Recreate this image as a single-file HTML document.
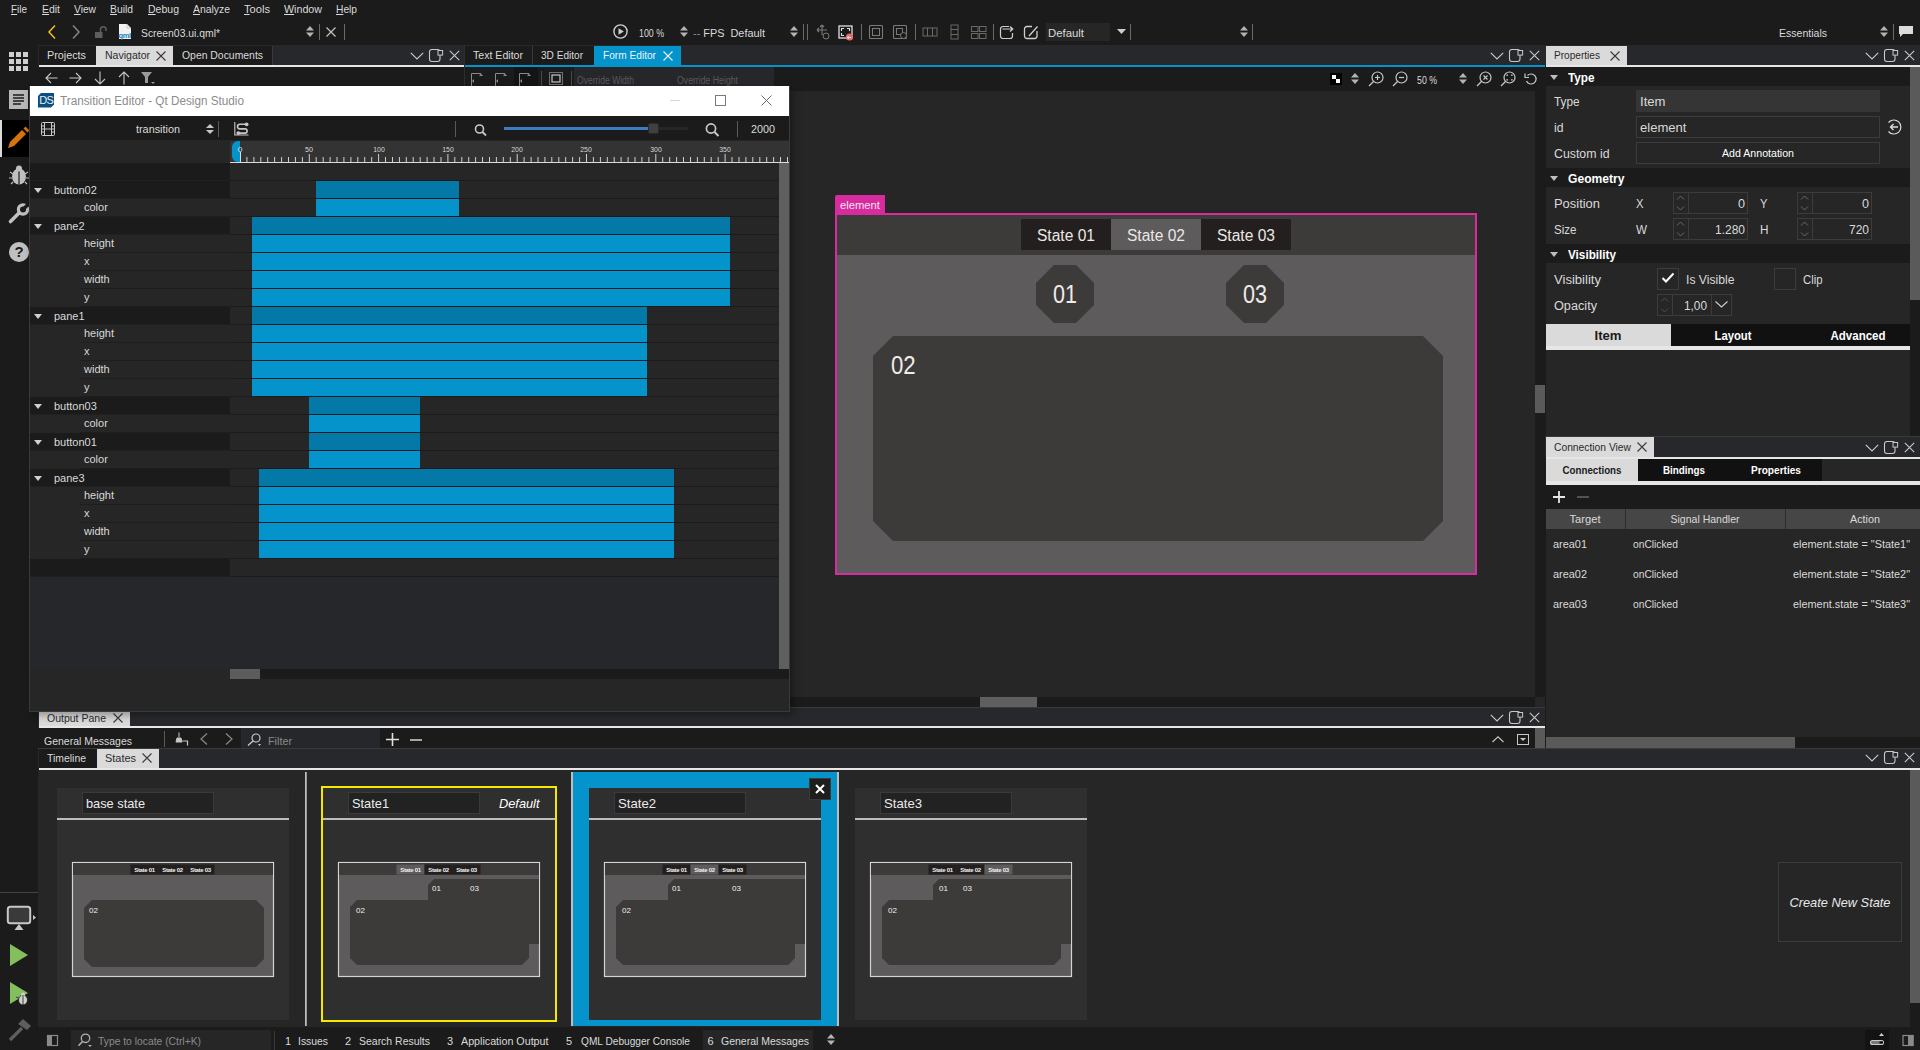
<!DOCTYPE html><html><head><meta charset="utf-8"><style>
html,body{margin:0;padding:0;width:1920px;height:1050px;overflow:hidden;background:#1b1b1b;}
.a{position:absolute;}
.t{font-family:"Liberation Sans",sans-serif;white-space:nowrap;}
svg{overflow:visible}
</style></head><body>
<div class="a" style="left:0px;top:0px;width:1920px;height:18px;background:#1b1b1b;"></div>
<div class="a t" style="left:11px;top:2px;font-size:11px;line-height:15px;color:#dadada;font-weight:normal;transform:scaleX(0.9027);transform-origin:left center;text-underline-offset:1px;"><u>F</u>ile</div>
<div class="a t" style="left:42px;top:2px;font-size:11px;line-height:15px;color:#dadada;font-weight:normal;transform:scaleX(0.9496);transform-origin:left center;text-underline-offset:1px;"><u>E</u>dit</div>
<div class="a t" style="left:74px;top:2px;font-size:11px;line-height:15px;color:#dadada;font-weight:normal;transform:scaleX(0.9304);transform-origin:left center;text-underline-offset:1px;"><u>V</u>iew</div>
<div class="a t" style="left:110px;top:2px;font-size:11px;line-height:15px;color:#dadada;font-weight:normal;transform:scaleX(0.9403);transform-origin:left center;text-underline-offset:1px;"><u>B</u>uild</div>
<div class="a t" style="left:148px;top:2px;font-size:11px;line-height:15px;color:#dadada;font-weight:normal;transform:scaleX(0.9563);transform-origin:left center;text-underline-offset:1px;"><u>D</u>ebug</div>
<div class="a t" style="left:193px;top:2px;font-size:11px;line-height:15px;color:#dadada;font-weight:normal;transform:scaleX(0.9454);transform-origin:left center;text-underline-offset:1px;"><u>A</u>nalyze</div>
<div class="a t" style="left:244px;top:2px;font-size:11px;line-height:15px;color:#dadada;font-weight:normal;transform:scaleX(1.0125);transform-origin:left center;text-underline-offset:1px;"><u>T</u>ools</div>
<div class="a t" style="left:284px;top:2px;font-size:11px;line-height:15px;color:#dadada;font-weight:normal;transform:scaleX(0.9713);transform-origin:left center;text-underline-offset:1px;"><u>W</u>indow</div>
<div class="a t" style="left:336px;top:2px;font-size:11px;line-height:15px;color:#dadada;font-weight:normal;transform:scaleX(0.9282);transform-origin:left center;text-underline-offset:1px;"><u>H</u>elp</div>
<div class="a" style="left:0px;top:18px;width:1920px;height:27px;background:#1b1b1b;"></div>
<svg class="a" style="left:48px;top:25px;" width="8" height="14" viewBox="0 0 8 14"><path d="M7 0.5 L1 7.0 L7 13.5" fill="none" stroke="#efc21a" stroke-width="1.5"/></svg>
<svg class="a" style="left:72px;top:25px;" width="8" height="14" viewBox="0 0 8 14"><path d="M1 0.5 L7 7.0 L1 13.5" fill="none" stroke="#8a8a8a" stroke-width="1.4"/></svg>
<svg class="a" style="left:94px;top:25px;" width="14" height="14" viewBox="0 0 14 14"><rect x="1" y="7" width="7.5" height="6" fill="#5e5e5e"/><path d="M6.5 7 V4 A2.8 2.8 0 0 1 12 4 V6" fill="none" stroke="#5e5e5e" stroke-width="1.5"/></svg>
<svg class="a" style="left:118px;top:23px;" width="14" height="17" viewBox="0 0 14 17"><path d="M1 1 H9 L13 5 V16 H1Z" fill="#f2f2f2"/><path d="M9 1 V5 H13" fill="none" stroke="#bbb" stroke-width="0.8"/><text x="0.5" y="14.5" font-size="7.5" font-weight="bold" fill="#1a86b8" font-family="Liberation Sans" letter-spacing="-0.4">qml</text></svg>
<div class="a t" style="left:141px;top:26px;font-size:11px;line-height:15px;color:#dadada;font-weight:normal;transform:scaleX(0.9431);transform-origin:left center;">Screen03.ui.qml*</div>
<svg class="a" style="left:306px;top:26px;" width="8" height="11" viewBox="0 0 8 11"><path d="M0 4.5 L4.0 0 L8 4.5Z M0 6.5 L4.0 11 L8 6.5Z" fill="#b3b3b3"/></svg>
<div class="a" style="left:319px;top:24px;width:1px;height:16px;background:#6a6a6a;"></div>
<svg class="a" style="left:326px;top:27px;" width="10" height="10" viewBox="0 0 10 10"><path d="M0.5 0.5 L9.5 9.5 M9.5 0.5 L0.5 9.5" stroke="#c0c0c0" stroke-width="1.3"/></svg>
<div class="a" style="left:344px;top:24px;width:1px;height:16px;background:#6a6a6a;"></div>
<svg class="a" style="left:613px;top:24px;" width="15" height="15" viewBox="0 0 15 15"><circle cx="7.5" cy="7.5" r="6.6" fill="none" stroke="#cfcfcf" stroke-width="1.4"/><path d="M5.5 4.2 L10.8 7.5 L5.5 10.8Z" fill="#cfcfcf"/></svg>
<div class="a t" style="left:639px;top:26px;font-size:11px;line-height:15px;color:#dadada;font-weight:normal;transform:scaleX(0.8015);transform-origin:left center;">100 %</div>
<svg class="a" style="left:680px;top:26px;" width="8" height="11" viewBox="0 0 8 11"><path d="M0 4.5 L4.0 0 L8 4.5Z M0 6.5 L4.0 11 L8 6.5Z" fill="#b3b3b3"/></svg>
<div class="a t" style="left:693px;top:26px;font-size:11px;line-height:15px;color:#dadada;font-weight:normal;transform:scaleX(0.9898);transform-origin:left center;"><span style="color:#8a8a8a">--</span> FPS&nbsp; Default</div>
<svg class="a" style="left:790px;top:26px;" width="8" height="11" viewBox="0 0 8 11"><path d="M0 4.5 L4.0 0 L8 4.5Z M0 6.5 L4.0 11 L8 6.5Z" fill="#b3b3b3"/></svg>
<div class="a" style="left:803px;top:24px;width:1px;height:16px;background:#6a6a6a;"></div>
<div class="a" style="left:807px;top:24px;width:1px;height:16px;background:#6a6a6a;"></div>
<svg class="a" style="left:815px;top:24px;" width="16" height="16" viewBox="0 0 16 16"><path d="M7 1 V11 M2 6 H12 M7 1 L5 3 M7 1 L9 3 M2 6 L4 4 M2 6 L4 8" stroke="#7a7a7a" stroke-width="1.1" fill="none"/><circle cx="11" cy="12" r="3" fill="none" stroke="#7a7a7a"/></svg>
<svg class="a" style="left:838px;top:25px;" width="16" height="16" viewBox="0 0 16 16"><rect x="1" y="1" width="13" height="12" fill="none" stroke="#e0e0e0" stroke-width="1.3"/><path d="M3.5 6 V3.5 H6 M9 3.5 H11.5 V6 M3.5 8 V10.5 H6" stroke="#e0e0e0" stroke-width="1.1" fill="none"/><circle cx="11.5" cy="12" r="3.6" fill="#e86a6a"/><path d="M9.8 12.5 H13 M10.5 11 L9.5 12.5 L10.5 14" stroke="#fff" stroke-width="0.8" fill="none"/></svg>
<div class="a" style="left:861px;top:24px;width:1px;height:16px;background:#6a6a6a;"></div>
<svg class="a" style="left:868px;top:24px;" width="16" height="16" viewBox="0 0 16 16"><rect x="1.5" y="1.5" width="13" height="13" rx="1" fill="none" stroke="#7a7a7a" stroke-width="1.1"/><rect x="4.5" y="4.5" width="7" height="7" fill="none" stroke="#7a7a7a" stroke-width="1"/></svg>
<svg class="a" style="left:892px;top:24px;" width="16" height="16" viewBox="0 0 16 16"><rect x="1.5" y="1.5" width="13" height="13" rx="1" fill="none" stroke="#7a7a7a" stroke-width="1.1"/><rect x="4.5" y="4.5" width="6" height="6" fill="none" stroke="#7a7a7a"/><circle cx="11.5" cy="11.5" r="3" fill="#1b1b1b" stroke="#7a7a7a"/></svg>
<div class="a" style="left:915px;top:24px;width:1px;height:16px;background:#6a6a6a;"></div>
<svg class="a" style="left:922px;top:27px;" width="16" height="10" viewBox="0 0 16 10"><rect x="1" y="1" width="14" height="8" fill="none" stroke="#6a6a6a" stroke-width="1"/><path d="M5.5 1 V9 M10.5 1 V9" stroke="#6a6a6a"/></svg>
<svg class="a" style="left:950px;top:24px;" width="9" height="16" viewBox="0 0 9 16"><rect x="1" y="1" width="7" height="14" fill="none" stroke="#6a6a6a" stroke-width="1"/><path d="M1 5.5 H8 M1 10.5 H8" stroke="#6a6a6a"/></svg>
<svg class="a" style="left:971px;top:26px;" width="16" height="13" viewBox="0 0 16 13"><rect x="0.5" y="0.5" width="6.5" height="5" fill="none" stroke="#6a6a6a"/><rect x="8.5" y="0.5" width="6.5" height="5" fill="none" stroke="#6a6a6a"/><rect x="0.5" y="7.5" width="6.5" height="5" fill="none" stroke="#6a6a6a"/><rect x="8.5" y="7.5" width="6.5" height="5" fill="none" stroke="#6a6a6a"/></svg>
<div class="a" style="left:993px;top:24px;width:1px;height:16px;background:#6a6a6a;"></div>
<svg class="a" style="left:999px;top:24px;" width="16" height="16" viewBox="0 0 16 16"><path d="M13.5 9 V12 A2.5 2.5 0 0 1 11 14.5 H4 A2.5 2.5 0 0 1 1.5 12 V5 A2.5 2.5 0 0 1 4 2.5 H10" fill="none" stroke="#cfcfcf" stroke-width="1.2"/><path d="M3.5 5 H13.5 M11 2.5 L13.8 5 L11 7.5" fill="none" stroke="#cfcfcf" stroke-width="1.2"/></svg>
<svg class="a" style="left:1023px;top:24px;" width="16" height="16" viewBox="0 0 16 16"><path d="M14 7 V12 A2.5 2.5 0 0 1 11.5 14.5 H4 A2.5 2.5 0 0 1 1.5 12 V5 A2.5 2.5 0 0 1 4 2.5 H9 M6 12 L14.5 2.5" fill="none" stroke="#cfcfcf" stroke-width="1.3"/></svg>
<div class="a" style="left:1046px;top:23px;width:64px;height:18px;background:#262626;"></div>
<div class="a t" style="left:1048px;top:26px;font-size:11px;line-height:15px;color:#dadada;font-weight:normal;transform:scaleX(1.0329);transform-origin:left center;">Default</div>
<svg class="a" style="left:1117px;top:29px;" width="9" height="5" viewBox="0 0 9 5"><path d="M0 0 H9 L4.5 5Z" fill="#cfcfcf"/></svg>
<div class="a" style="left:1130px;top:24px;width:1px;height:16px;background:#6a6a6a;"></div>
<svg class="a" style="left:1240px;top:26px;" width="8" height="11" viewBox="0 0 8 11"><path d="M0 4.5 L4.0 0 L8 4.5Z M0 6.5 L4.0 11 L8 6.5Z" fill="#b3b3b3"/></svg>
<div class="a" style="left:1252px;top:24px;width:1px;height:16px;background:#6a6a6a;"></div>
<div class="a t" style="left:1779px;top:26px;font-size:11px;line-height:15px;color:#dadada;font-weight:normal;transform:scaleX(0.9574);transform-origin:left center;">Essentials</div>
<svg class="a" style="left:1880px;top:26px;" width="8" height="11" viewBox="0 0 8 11"><path d="M0 4.5 L4.0 0 L8 4.5Z M0 6.5 L4.0 11 L8 6.5Z" fill="#b3b3b3"/></svg>
<div class="a" style="left:1893px;top:24px;width:1px;height:16px;background:#6a6a6a;"></div>
<svg class="a" style="left:1898px;top:25px;" width="16" height="12" viewBox="0 0 16 12"><path d="M1 1 H15 V9 H5 L2 12 V9 H1Z" fill="#dcdcdc"/></svg>
<div class="a" style="left:0px;top:45px;width:38px;height:985px;background:#1b1b1b;"></div>
<svg class="a" style="left:9px;top:52px;" width="20" height="20" viewBox="0 0 20 20"><rect x="0" y="0" width="5" height="5" fill="#cfcfcf"/><rect x="0" y="7" width="5" height="5" fill="#cfcfcf"/><rect x="0" y="14" width="5" height="5" fill="#cfcfcf"/><rect x="7" y="0" width="5" height="5" fill="#cfcfcf"/><rect x="7" y="7" width="5" height="5" fill="#cfcfcf"/><rect x="7" y="14" width="5" height="5" fill="#cfcfcf"/><rect x="14" y="0" width="5" height="5" fill="#cfcfcf"/><rect x="14" y="7" width="5" height="5" fill="#cfcfcf"/><rect x="14" y="14" width="5" height="5" fill="#cfcfcf"/></svg>
<div class="a" style="left:9px;top:90px;width:19px;height:19px;background:#b8b8b8;"></div>
<svg class="a" style="left:9px;top:90px;" width="19" height="19" viewBox="0 0 19 19"><path d="M4 5 H15 M4 8 H15 M4 11 H15 M4 14 H12" stroke="#1b1b1b" stroke-width="1.3"/></svg>
<div class="a" style="left:0px;top:120px;width:30px;height:37px;background:#000000;"></div>
<div class="a" style="left:0px;top:120px;width:2px;height:37px;background:#dadada;"></div>
<svg class="a" style="left:6px;top:126px;" width="24" height="24" viewBox="0 0 24 24"><path d="M2 22 L4 16 L16 4 L20 8 L8 20Z" fill="#d9720a"/><path d="M17.5 2.5 L19.5 0.5 L23.5 4.5 L21.5 6.5Z" fill="#d9720a"/></svg>
<svg class="a" style="left:8px;top:163px;" width="22" height="24" viewBox="0 0 22 24"><ellipse cx="11" cy="13.5" rx="7" ry="8" fill="#c0c0c0"/><path d="M11 6 V21.5" stroke="#1b1b1b" stroke-width="1.2"/><path d="M2 9 L5 11 M20 9 L17 11 M1 15 H4 M21 15 H18 M3 21 L5 19 M19 21 L17 19" stroke="#c0c0c0" stroke-width="1.2"/><circle cx="11" cy="5.5" r="3" fill="#c0c0c0"/></svg>
<svg class="a" style="left:8px;top:202px;" width="22" height="24" viewBox="0 0 22 24"><path d="M2.5 19.5 L11 11" stroke="#c0c0c0" stroke-width="3.6" stroke-linecap="round"/><circle cx="15" cy="7.5" r="4.6" fill="none" stroke="#c0c0c0" stroke-width="3.2"/><path d="M15 7.5 L21 1.5" stroke="#1b1b1b" stroke-width="3.4"/></svg>
<svg class="a" style="left:8px;top:241px;" width="22" height="22" viewBox="0 0 22 22"><circle cx="11" cy="11" r="10" fill="#c0c0c0"/><text x="11" y="16" text-anchor="middle" font-size="15" font-weight="bold" fill="#1b1b1b" font-family="Liberation Sans">?</text></svg>
<div class="a" style="left:0px;top:892px;width:38px;height:1px;background:#444444;"></div>
<svg class="a" style="left:6px;top:905px;" width="32" height="26" viewBox="0 0 32 26"><rect x="1.8" y="1.8" width="22.4" height="16.4" rx="2.5" fill="#3a3a3a" stroke="#c8c8c8" stroke-width="2"/><path d="M8.5 25 L13 19 L17.5 25Z" fill="#c8c8c8"/><path d="M27 10 L30 12.5 L27 15Z" fill="#c8c8c8"/></svg>
<svg class="a" style="left:10px;top:944px;" width="18" height="22" viewBox="0 0 18 22"><path d="M0 0 L18 11 L0 22Z" fill="#84bf5e"/></svg>
<svg class="a" style="left:10px;top:982px;" width="20" height="24" viewBox="0 0 20 24"><path d="M0 0 L18 11 L0 22Z" fill="#84bf5e"/><ellipse cx="13" cy="18" rx="4.5" ry="5" fill="#d0d0d0" stroke="#1b1b1b" stroke-width="0.8"/><circle cx="13" cy="12.5" r="2" fill="#d0d0d0"/><path d="M13 13 V23 M6 15 L8.5 16 M20 15 L17.5 16 M6 21 L8.5 20 M20 21 L17.5 20" stroke="#1b1b1b" stroke-width="0.8"/></svg>
<svg class="a" style="left:7px;top:1019px;" width="26" height="24" viewBox="0 0 26 24"><path d="M3 21 L15 9" stroke="#5e5e5e" stroke-width="3.2"/><path d="M11 5 L16 0 L24 7 L20 11Z" fill="#5e5e5e"/></svg>
<div class="a" style="left:38px;top:45px;width:427px;height:20px;background:#27282b;"></div>
<div class="a" style="left:39px;top:46px;width:57px;height:19px;background:#1b1b1b;"></div>
<div class="a t" style="left:47px;top:48px;font-size:11px;line-height:15px;color:#dadada;font-weight:normal;transform:scaleX(0.9815);transform-origin:left center;">Projects</div>
<div class="a" style="left:96px;top:46px;width:77px;height:19px;background:#dadada;"></div>
<div class="a t" style="left:105px;top:48px;font-size:11px;line-height:15px;color:#2a2a2a;font-weight:normal;transform:scaleX(0.9558);transform-origin:left center;">Navigator</div>
<svg class="a" style="left:156px;top:51px;" width="10" height="10" viewBox="0 0 10 10"><path d="M0.5 0.5 L9.5 9.5 M9.5 0.5 L0.5 9.5" stroke="#3a3a3a" stroke-width="1.1"/></svg>
<div class="a" style="left:173px;top:46px;width:99px;height:19px;background:#1b1b1b;"></div>
<div class="a t" style="left:182px;top:48px;font-size:11px;line-height:15px;color:#dadada;font-weight:normal;transform:scaleX(0.9463);transform-origin:left center;">Open Documents</div>
<div class="a" style="left:272px;top:46px;width:1px;height:19px;background:#3a3a3a;"></div>
<svg class="a" style="left:410px;top:52px;" width="14" height="8" viewBox="0 0 14 8"><path d="M0.8 0.8 L7 7 L13.2 0.8" fill="none" stroke="#c8c8c8" stroke-width="1.15"/></svg>
<svg class="a" style="left:428px;top:49px;" width="15" height="13" viewBox="0 0 15 13"><rect x="1.5" y="0.5" width="10.5" height="12" rx="2.5" fill="none" stroke="#c8c8c8" stroke-width="1.1"/><rect x="10" y="1.5" width="4.6" height="4.6" fill="#27282b" stroke="#c8c8c8" stroke-width="1"/></svg>
<svg class="a" style="left:449px;top:50px;" width="11" height="11" viewBox="0 0 11 11"><path d="M0.8 0.8 L10.2 10.2 M10.2 0.8 L0.8 10.2" stroke="#c8c8c8" stroke-width="1.1"/></svg>
<div class="a" style="left:39px;top:65px;width:425px;height:2px;background:#e6e6e6;"></div>
<div class="a" style="left:38px;top:67px;width:427px;height:19px;background:#1b1b1b;"></div>
<svg class="a" style="left:45px;top:72px;" width="13" height="12" viewBox="0 0 13 12"><path d="M12.5 6 H1 M6 1 L1 6 L6 11" fill="none" stroke="#c8c8c8" stroke-width="1.1"/></svg>
<svg class="a" style="left:69px;top:72px;" width="13" height="12" viewBox="0 0 13 12"><path d="M0.5 6 H12 M7 1 L12 6 L7 11" fill="none" stroke="#c8c8c8" stroke-width="1.1"/></svg>
<svg class="a" style="left:94px;top:71px;" width="12" height="14" viewBox="0 0 12 14"><path d="M6 0.5 V13 M1 8 L6 13 L11 8" fill="none" stroke="#c8c8c8" stroke-width="1.1"/></svg>
<svg class="a" style="left:118px;top:71px;" width="12" height="14" viewBox="0 0 12 14"><path d="M6 13.5 V1 M1 6 L6 1 L11 6" fill="none" stroke="#c8c8c8" stroke-width="1.1"/></svg>
<svg class="a" style="left:141px;top:72px;" width="14" height="14" viewBox="0 0 14 14"><path d="M0 0 H11 L7 5 V11 H4 V5Z" fill="#9a9a9a"/><path d="M10 10 H14 L12 12Z" fill="#9a9a9a"/></svg>
<div class="a" style="left:465px;top:45px;width:1081px;height:20px;background:#27282b;"></div>
<div class="a" style="left:465px;top:46px;width:67px;height:19px;background:#1b1b1b;"></div>
<div class="a t" style="left:473px;top:48px;font-size:11px;line-height:15px;color:#dadada;font-weight:normal;transform:scaleX(0.9622);transform-origin:left center;">Text Editor</div>
<div class="a" style="left:532px;top:46px;width:1px;height:19px;background:#3a3a3a;"></div>
<div class="a" style="left:533px;top:46px;width:61px;height:19px;background:#1b1b1b;"></div>
<div class="a t" style="left:541px;top:48px;font-size:11px;line-height:15px;color:#dadada;font-weight:normal;transform:scaleX(0.9159);transform-origin:left center;">3D Editor</div>
<div class="a" style="left:594px;top:46px;width:87px;height:19px;background:#0593cc;"></div>
<div class="a t" style="left:603px;top:48px;font-size:11px;line-height:15px;color:#eaf5fb;font-weight:normal;transform:scaleX(0.9224);transform-origin:left center;">Form Editor</div>
<svg class="a" style="left:663px;top:51px;" width="10" height="10" viewBox="0 0 10 10"><path d="M0.5 0.5 L9.5 9.5 M9.5 0.5 L0.5 9.5" stroke="#eaf5fb" stroke-width="1.1"/></svg>
<svg class="a" style="left:1490px;top:52px;" width="14" height="8" viewBox="0 0 14 8"><path d="M0.8 0.8 L7 7 L13.2 0.8" fill="none" stroke="#c8c8c8" stroke-width="1.15"/></svg>
<svg class="a" style="left:1508px;top:49px;" width="15" height="13" viewBox="0 0 15 13"><rect x="1.5" y="0.5" width="10.5" height="12" rx="2.5" fill="none" stroke="#c8c8c8" stroke-width="1.1"/><rect x="10" y="1.5" width="4.6" height="4.6" fill="#27282b" stroke="#c8c8c8" stroke-width="1"/></svg>
<svg class="a" style="left:1529px;top:50px;" width="11" height="11" viewBox="0 0 11 11"><path d="M0.8 0.8 L10.2 10.2 M10.2 0.8 L0.8 10.2" stroke="#c8c8c8" stroke-width="1.1"/></svg>
<div class="a" style="left:464px;top:45px;width:1px;height:665px;background:#2e2e2e;"></div>
<div class="a" style="left:465px;top:65px;width:1080px;height:2px;background:#0593cc;"></div>
<div class="a" style="left:465px;top:67px;width:1080px;height:24px;background:#1b1b1b;"></div>
<div class="a" style="left:514px;top:67px;width:24px;height:24px;background:#141414;"></div>
<svg class="a" style="left:471px;top:73px;" width="13" height="14" viewBox="0 0 13 14"><path d="M0.5 14 V0.5 H10" fill="none" stroke="#8a8a8a" stroke-width="1"/><path d="M8 3 L10 0.5 L12 3Z M1 8 L3 6 L3 10Z" fill="#8a8a8a"/></svg>
<svg class="a" style="left:495px;top:73px;" width="13" height="14" viewBox="0 0 13 14"><path d="M0.5 14 V0.5 H10" fill="none" stroke="#8a8a8a" stroke-width="1"/><path d="M8 3 L10 0.5 L12 3Z M1 8 L3 6 L3 10Z" fill="#8a8a8a"/></svg>
<svg class="a" style="left:519px;top:73px;" width="13" height="14" viewBox="0 0 13 14"><path d="M0.5 14 V0.5 H10" fill="none" stroke="#8a8a8a" stroke-width="1"/><path d="M8 3 L10 0.5 L12 3Z M1 8 L3 6 L3 10Z" fill="#8a8a8a"/></svg>
<div class="a" style="left:541px;top:71px;width:1px;height:16px;background:#4a4a4a;"></div>
<svg class="a" style="left:549px;top:72px;" width="14" height="13" viewBox="0 0 14 13"><rect x="0.5" y="0.5" width="13" height="12" fill="none" stroke="#c8c8c8" stroke-dasharray="1 1"/><rect x="3" y="3" width="8" height="7" fill="none" stroke="#c8c8c8" stroke-width="1.2"/></svg>
<div class="a" style="left:571px;top:71px;width:1px;height:16px;background:#4a4a4a;"></div>
<div class="a" style="left:574px;top:67px;width:200px;height:24px;background:#26272a;"></div>
<div class="a t" style="left:577px;top:74px;font-size:10px;line-height:14px;color:#5a5a5a;font-weight:normal;transform:scaleX(0.8548);transform-origin:left center;">Override Width</div>
<div class="a t" style="left:677px;top:74px;font-size:10px;line-height:14px;color:#5a5a5a;font-weight:normal;transform:scaleX(0.8710);transform-origin:left center;">Override Height</div>
<div class="a" style="left:1330px;top:73px;width:12px;height:12px;background:#000;"></div>
<div class="a" style="left:1332px;top:75px;width:4px;height:4px;background:#fff;"></div>
<div class="a" style="left:1336px;top:79px;width:4px;height:4px;background:#fff;"></div>
<svg class="a" style="left:1351px;top:73px;" width="8" height="11" viewBox="0 0 8 11"><path d="M0 4.5 L4.0 0 L8 4.5Z M0 6.5 L4.0 11 L8 6.5Z" fill="#b3b3b3"/></svg>
<svg class="a" style="left:1368px;top:71px;" width="16" height="16" viewBox="0 0 16 16"><circle cx="9.5" cy="6.5" r="5.5" fill="none" stroke="#c8c8c8" stroke-width="1.2"/><path d="M5.5 10.5 L1 15" stroke="#c8c8c8" stroke-width="1.3"/><path d="M9.5 4 V9 M7 6.5 H12" stroke="#c8c8c8" stroke-width="1.2"/></svg>
<svg class="a" style="left:1392px;top:71px;" width="16" height="16" viewBox="0 0 16 16"><circle cx="9.5" cy="6.5" r="5.5" fill="none" stroke="#c8c8c8" stroke-width="1.2"/><path d="M5.5 10.5 L1 15" stroke="#c8c8c8" stroke-width="1.3"/><path d="M7 6.5 H12" stroke="#c8c8c8" stroke-width="1.2"/></svg>
<div class="a t" style="left:1417px;top:73px;font-size:11px;line-height:15px;color:#dadada;font-weight:normal;transform:scaleX(0.7977);transform-origin:left center;">50 %</div>
<svg class="a" style="left:1459px;top:73px;" width="8" height="11" viewBox="0 0 8 11"><path d="M0 4.5 L4.0 0 L8 4.5Z M0 6.5 L4.0 11 L8 6.5Z" fill="#b3b3b3"/></svg>
<svg class="a" style="left:1476px;top:71px;" width="16" height="16" viewBox="0 0 16 16"><circle cx="9.5" cy="6.5" r="5.5" fill="none" stroke="#c8c8c8" stroke-width="1.2"/><path d="M5.5 10.5 L1 15" stroke="#c8c8c8" stroke-width="1.3"/><path d="M7.5 4.5 L11.5 8.5 M11.5 4.5 L7.5 8.5" stroke="#c8c8c8" stroke-width="1.1"/></svg>
<svg class="a" style="left:1500px;top:71px;" width="16" height="16" viewBox="0 0 16 16"><circle cx="9.5" cy="6.5" r="5.5" fill="none" stroke="#c8c8c8" stroke-width="1.2"/><path d="M5.5 10.5 L1 15" stroke="#c8c8c8" stroke-width="1.3"/><path d="M7 5 V4 H8 M11 4 H12 V5 M12 8 V9 H11 M8 9 H7 V8" stroke="#c8c8c8" stroke-width="1.1" fill="none"/></svg>
<svg class="a" style="left:1524px;top:72px;" width="14" height="14" viewBox="0 0 14 14"><path d="M3.5 3.5 A5 5 0 1 1 2.5 9" fill="none" stroke="#c8c8c8" stroke-width="1.2"/><path d="M1 1.5 V5.5 H5" fill="none" stroke="#c8c8c8" stroke-width="1.2"/></svg>
<div class="a" style="left:465px;top:91px;width:1070px;height:606px;background:#262626;"></div>
<div class="a" style="left:1535px;top:91px;width:10px;height:606px;background:#1b1b1b;"></div>
<div class="a" style="left:1535px;top:385px;width:10px;height:28px;background:#5a5a5a;"></div>
<div class="a" style="left:465px;top:697px;width:1070px;height:10px;background:#1b1b1b;"></div>
<div class="a" style="left:980px;top:697px;width:57px;height:10px;background:#5f5f5f;"></div>
<div class="a" style="left:1535px;top:697px;width:10px;height:10px;background:#262626;"></div>
<div class="a" style="left:835px;top:195px;width:50px;height:20px;background:#d82b9f;border-top-left-radius:2px;"></div>
<div class="a t" style="left:840px;top:198px;font-size:11px;line-height:15px;color:#f6e4f0;font-weight:normal;transform:scaleX(1.0221);transform-origin:left center;">element</div>
<div class="a" style="left:835px;top:213px;width:642px;height:362px;background:#d82b9f;"></div>
<div class="a" style="left:837px;top:215px;width:638px;height:358px;background:#5d5b5c;"></div>
<div class="a" style="left:837px;top:215px;width:638px;height:40px;background:#3d3b3a;"></div>
<div class="a" style="left:1021px;top:219px;width:90px;height:31px;background:#231f1e;"></div>
<div class="a t" style="left:766px;width:600px;text-align:center;top:226px;font-size:16px;line-height:20px;color:#ebe7e5;font-weight:normal;transform:scaleX(0.9731);transform-origin:center center;">State 01</div>
<div class="a" style="left:1111px;top:219px;width:90px;height:31px;background:#5d5b5c;"></div>
<div class="a t" style="left:856px;width:600px;text-align:center;top:226px;font-size:16px;line-height:20px;color:#ebe7e5;font-weight:normal;transform:scaleX(0.9731);transform-origin:center center;">State 02</div>
<div class="a" style="left:1201px;top:219px;width:90px;height:31px;background:#231f1e;"></div>
<div class="a t" style="left:946px;width:600px;text-align:center;top:226px;font-size:16px;line-height:20px;color:#ebe7e5;font-weight:normal;transform:scaleX(0.9731);transform-origin:center center;">State 03</div>
<svg class="a" style="left:0;top:0" width="1920" height="1050"><polygon points="1054,265 1076,265 1094,283 1094,305 1076,323 1054,323 1036,305 1036,283" fill="#3d3b3a"/><polygon points="1244,265 1266,265 1284,283 1284,305 1266,323 1244,323 1226,305 1226,283" fill="#3d3b3a"/><polygon points="893,336 1423,336 1443,356 1443,521 1423,541 893,541 873,521 873,356" fill="#3d3b3a"/></svg>
<div class="a t" style="left:765px;width:600px;text-align:center;top:280px;font-size:25px;line-height:29px;color:#efebe9;font-weight:normal;transform:scaleX(0.8630);transform-origin:center center;">01</div>
<div class="a t" style="left:955px;width:600px;text-align:center;top:280px;font-size:25px;line-height:29px;color:#efebe9;font-weight:normal;transform:scaleX(0.8630);transform-origin:center center;">03</div>
<div class="a t" style="left:891px;top:351px;font-size:25px;line-height:29px;color:#efebe9;font-weight:normal;transform:scaleX(0.8882);transform-origin:left center;">02</div>
<div class="a" style="left:38px;top:707px;width:1507px;height:21px;background:#27282b;"></div>
<div class="a" style="left:39px;top:711px;width:91px;height:15px;background:#dadada;"></div>
<div class="a t" style="left:47px;top:711px;font-size:11px;line-height:15px;color:#2a2a2a;font-weight:normal;transform:scaleX(0.9552);transform-origin:left center;">Output Pane</div>
<svg class="a" style="left:113px;top:713px;" width="10" height="10" viewBox="0 0 10 10"><path d="M0.5 0.5 L9.5 9.5 M9.5 0.5 L0.5 9.5" stroke="#3a3a3a" stroke-width="1.1"/></svg>
<svg class="a" style="left:1490px;top:714px;" width="14" height="8" viewBox="0 0 14 8"><path d="M0.8 0.8 L7 7 L13.2 0.8" fill="none" stroke="#c8c8c8" stroke-width="1.15"/></svg>
<svg class="a" style="left:1508px;top:711px;" width="15" height="13" viewBox="0 0 15 13"><rect x="1.5" y="0.5" width="10.5" height="12" rx="2.5" fill="none" stroke="#c8c8c8" stroke-width="1.1"/><rect x="10" y="1.5" width="4.6" height="4.6" fill="#27282b" stroke="#c8c8c8" stroke-width="1"/></svg>
<svg class="a" style="left:1529px;top:712px;" width="11" height="11" viewBox="0 0 11 11"><path d="M0.8 0.8 L10.2 10.2 M10.2 0.8 L0.8 10.2" stroke="#c8c8c8" stroke-width="1.1"/></svg>
<div class="a" style="left:39px;top:726px;width:1506px;height:2px;background:#e6e6e6;"></div>
<div class="a" style="left:38px;top:728px;width:1507px;height:20px;background:#1b1b1b;"></div>
<div class="a" style="left:1535px;top:728px;width:10px;height:20px;background:#5a5a5a;"></div>
<div class="a" style="left:465px;top:707px;width:1080px;height:1px;background:#3a3a3a;"></div>
<div class="a t" style="left:44px;top:734px;font-size:11px;line-height:15px;color:#dadada;font-weight:normal;transform:scaleX(0.9531);transform-origin:left center;">General Messages</div>
<div class="a" style="left:164px;top:731px;width:1px;height:16px;background:#5a5a5a;"></div>
<svg class="a" style="left:174px;top:732px;" width="15" height="14" viewBox="0 0 15 14"><path d="M5 0.5 V5 M2 10 L3 6 H7 L8 10Z" stroke="#c8c8c8" fill="#c8c8c8" stroke-width="1"/><path d="M8.5 9 H13.5 V13.5" fill="none" stroke="#c8c8c8" stroke-width="1.2"/></svg>
<svg class="a" style="left:200px;top:733px;" width="8" height="12" viewBox="0 0 8 12"><path d="M7 0.5 L1 6.0 L7 11.5" fill="none" stroke="#8a8a8a" stroke-width="1.2"/></svg>
<svg class="a" style="left:225px;top:733px;" width="8" height="12" viewBox="0 0 8 12"><path d="M1 0.5 L7 6.0 L1 11.5" fill="none" stroke="#8a8a8a" stroke-width="1.2"/></svg>
<div class="a" style="left:241px;top:728px;width:139px;height:20px;background:#26272a;"></div>
<svg class="a" style="left:247px;top:733px;" width="15" height="13" viewBox="0 0 15 13"><circle cx="9" cy="5" r="4" fill="none" stroke="#c8c8c8" stroke-width="1.2"/><path d="M6 8 L1 12.5" stroke="#c8c8c8" stroke-width="1.4"/><path d="M11 11 H14 L12.5 13Z" fill="#c8c8c8"/></svg>
<div class="a t" style="left:268px;top:734px;font-size:10.5px;line-height:14px;color:#8a8a8a;font-weight:normal;transform:scaleX(1.0286);transform-origin:left center;">Filter</div>
<svg class="a" style="left:386px;top:733px;" width="13" height="13" viewBox="0 0 13 13"><path d="M6.5 0 V13 M0 6.5 H13" stroke="#e0e0e0" stroke-width="1.6"/></svg>
<svg class="a" style="left:410px;top:739px;" width="12" height="2" viewBox="0 0 12 2"><path d="M0 1 H12" stroke="#c8c8c8" stroke-width="1.6"/></svg>
<svg class="a" style="left:1492px;top:736px;" width="12" height="7" viewBox="0 0 12 7"><path d="M0.5 6 L6 0.8 L11.5 6" fill="none" stroke="#c8c8c8" stroke-width="1.1"/></svg>
<svg class="a" style="left:1517px;top:734px;" width="12" height="11" viewBox="0 0 12 11"><rect x="0.5" y="0.5" width="11" height="10" fill="none" stroke="#c8c8c8"/><path d="M3 4 H9 L6 7Z" fill="#c8c8c8"/></svg>
<div class="a" style="left:29px;top:86px;width:761px;height:626px;background:#3a3a3a;box-shadow:3px 3px 8px rgba(0,0,0,0.35);"></div>
<div class="a" style="left:30px;top:86px;width:759px;height:625px;background:#262626;"></div>
<div class="a" style="left:30px;top:86px;width:759px;height:30px;background:#ffffff;"></div>
<svg class="a" style="left:38px;top:93px;" width="17" height="15" viewBox="0 0 17 15"><path d="M3 0 H16 V11.5 L13 14.5 H0 V3Z" fill="#0d4e80"/><text x="8.3" y="11" text-anchor="middle" font-size="11" font-weight="normal" fill="#e8f0f6" font-family="Liberation Sans" letter-spacing="-0.5">DS</text></svg>
<div class="a t" style="left:60px;top:93px;font-size:12px;line-height:16px;color:#8c8c8c;font-weight:normal;transform:scaleX(0.9771);transform-origin:left center;">Transition Editor - Qt Design Studio</div>
<div class="a" style="left:670px;top:100px;width:10px;height:1px;background:#d8d8d8;"></div>
<svg class="a" style="left:715px;top:95px;" width="11" height="11" viewBox="0 0 11 11"><rect x="0.5" y="0.5" width="10" height="10" fill="none" stroke="#7a7a7a" stroke-width="1"/></svg>
<svg class="a" style="left:761px;top:95px;" width="11" height="11" viewBox="0 0 11 11"><path d="M0.5 0.5 L10.5 10.5 M10.5 0.5 L0.5 10.5" stroke="#6a6a6a" stroke-width="1"/></svg>
<div class="a" style="left:30px;top:116px;width:759px;height:24px;background:#1b1b1b;"></div>
<svg class="a" style="left:41px;top:122px;" width="14" height="14" viewBox="0 0 14 14"><rect x="0.5" y="0.5" width="13" height="13" rx="1" fill="none" stroke="#c8c8c8"/><path d="M3.5 0.5 V13.5 M10.5 0.5 V13.5 M0.5 4 H3.5 M0.5 7 H3.5 M0.5 10 H3.5 M10.5 4 H13.5 M10.5 7 H13.5 M10.5 10 H13.5 M3.5 7 H10.5" stroke="#c8c8c8"/></svg>
<div class="a t" style="left:136px;top:122px;font-size:11px;line-height:15px;color:#dadada;font-weight:normal;transform:scaleX(0.9858);transform-origin:left center;">transition</div>
<svg class="a" style="left:206px;top:124px;" width="8" height="10" viewBox="0 0 8 10"><path d="M0 4.0 L4.0 0 L8 4.0Z M0 6.0 L4.0 10 L8 6.0Z" fill="#c8c8c8"/></svg>
<div class="a" style="left:218px;top:121px;width:1px;height:16px;background:#5a5a5a;"></div>
<svg class="a" style="left:234px;top:121px;" width="15" height="15" viewBox="0 0 15 15"><path d="M0.8 1 V14 H14.5" fill="none" stroke="#c8c8c8" stroke-width="1.1"/><path d="M12.5 3.3 H5.8 A2.3 2.3 0 0 0 5.8 7.9 H11 A2.1 2.1 0 0 1 11 12.1 H4.5" fill="none" stroke="#c8c8c8" stroke-width="1.6"/><circle cx="12.6" cy="3.3" r="1.9" fill="#c8c8c8"/><circle cx="4.3" cy="12.1" r="1.9" fill="#c8c8c8"/></svg>
<div class="a" style="left:455px;top:121px;width:1px;height:16px;background:#5a5a5a;"></div>
<svg class="a" style="left:474px;top:124px;" width="13" height="12" viewBox="0 0 13 12"><circle cx="5.5" cy="5" r="4" fill="none" stroke="#c8c8c8" stroke-width="1.6"/><path d="M8.5 8 L12 11.5" stroke="#c8c8c8" stroke-width="1.8"/></svg>
<div class="a" style="left:504px;top:127px;width:144px;height:3px;background:#3b7bc2;"></div>
<div class="a" style="left:658px;top:127px;width:30px;height:3px;background:#262626;"></div>
<div class="a" style="left:648px;top:123px;width:11px;height:11px;background:#404040;border-radius:2px;box-sizing:border-box;border:1px solid #2a2a2a;"></div>
<svg class="a" style="left:705px;top:123px;" width="14" height="14" viewBox="0 0 14 14"><circle cx="6" cy="5.5" r="4.6" fill="none" stroke="#c8c8c8" stroke-width="1.7"/><path d="M9.5 9 L13.5 13" stroke="#c8c8c8" stroke-width="1.9"/></svg>
<div class="a" style="left:737px;top:121px;width:1px;height:16px;background:#5a5a5a;"></div>
<div class="a t" style="left:751px;top:122px;font-size:11px;line-height:15px;color:#dadada;font-weight:normal;transform:scaleX(0.9807);transform-origin:left center;">2000</div>
<div class="a" style="left:30px;top:140px;width:759px;height:23px;background:#262626;"></div>
<div class="a" style="left:230px;top:141px;width:559px;height:21px;background:#333333;"></div>
<div class="a" style="left:230px;top:162px;width:559px;height:1px;background:#dcdcdc;"></div>
<svg class="a" style="left:230px;top:140px;" width="559" height="23" viewBox="0 0 559 23"><path d="M10.0 14 V22" stroke="#d0d0d0" stroke-width="1"/><path d="M16.9 17 V22" stroke="#d0d0d0" stroke-width="1"/><path d="M23.9 17 V22" stroke="#d0d0d0" stroke-width="1"/><path d="M30.8 17 V22" stroke="#d0d0d0" stroke-width="1"/><path d="M37.7 17 V22" stroke="#d0d0d0" stroke-width="1"/><path d="M44.6 17 V22" stroke="#d0d0d0" stroke-width="1"/><path d="M51.6 17 V22" stroke="#d0d0d0" stroke-width="1"/><path d="M58.5 17 V22" stroke="#d0d0d0" stroke-width="1"/><path d="M65.4 17 V22" stroke="#d0d0d0" stroke-width="1"/><path d="M72.4 17 V22" stroke="#d0d0d0" stroke-width="1"/><path d="M79.3 14 V22" stroke="#d0d0d0" stroke-width="1"/><path d="M86.2 17 V22" stroke="#d0d0d0" stroke-width="1"/><path d="M93.2 17 V22" stroke="#d0d0d0" stroke-width="1"/><path d="M100.1 17 V22" stroke="#d0d0d0" stroke-width="1"/><path d="M107.0 17 V22" stroke="#d0d0d0" stroke-width="1"/><path d="M113.9 17 V22" stroke="#d0d0d0" stroke-width="1"/><path d="M120.9 17 V22" stroke="#d0d0d0" stroke-width="1"/><path d="M127.8 17 V22" stroke="#d0d0d0" stroke-width="1"/><path d="M134.7 17 V22" stroke="#d0d0d0" stroke-width="1"/><path d="M141.7 17 V22" stroke="#d0d0d0" stroke-width="1"/><path d="M148.6 14 V22" stroke="#d0d0d0" stroke-width="1"/><path d="M155.5 17 V22" stroke="#d0d0d0" stroke-width="1"/><path d="M162.5 17 V22" stroke="#d0d0d0" stroke-width="1"/><path d="M169.4 17 V22" stroke="#d0d0d0" stroke-width="1"/><path d="M176.3 17 V22" stroke="#d0d0d0" stroke-width="1"/><path d="M183.2 17 V22" stroke="#d0d0d0" stroke-width="1"/><path d="M190.2 17 V22" stroke="#d0d0d0" stroke-width="1"/><path d="M197.1 17 V22" stroke="#d0d0d0" stroke-width="1"/><path d="M204.0 17 V22" stroke="#d0d0d0" stroke-width="1"/><path d="M211.0 17 V22" stroke="#d0d0d0" stroke-width="1"/><path d="M217.9 14 V22" stroke="#d0d0d0" stroke-width="1"/><path d="M224.8 17 V22" stroke="#d0d0d0" stroke-width="1"/><path d="M231.8 17 V22" stroke="#d0d0d0" stroke-width="1"/><path d="M238.7 17 V22" stroke="#d0d0d0" stroke-width="1"/><path d="M245.6 17 V22" stroke="#d0d0d0" stroke-width="1"/><path d="M252.5 17 V22" stroke="#d0d0d0" stroke-width="1"/><path d="M259.5 17 V22" stroke="#d0d0d0" stroke-width="1"/><path d="M266.4 17 V22" stroke="#d0d0d0" stroke-width="1"/><path d="M273.3 17 V22" stroke="#d0d0d0" stroke-width="1"/><path d="M280.3 17 V22" stroke="#d0d0d0" stroke-width="1"/><path d="M287.2 14 V22" stroke="#d0d0d0" stroke-width="1"/><path d="M294.1 17 V22" stroke="#d0d0d0" stroke-width="1"/><path d="M301.1 17 V22" stroke="#d0d0d0" stroke-width="1"/><path d="M308.0 17 V22" stroke="#d0d0d0" stroke-width="1"/><path d="M314.9 17 V22" stroke="#d0d0d0" stroke-width="1"/><path d="M321.8 17 V22" stroke="#d0d0d0" stroke-width="1"/><path d="M328.8 17 V22" stroke="#d0d0d0" stroke-width="1"/><path d="M335.7 17 V22" stroke="#d0d0d0" stroke-width="1"/><path d="M342.6 17 V22" stroke="#d0d0d0" stroke-width="1"/><path d="M349.6 17 V22" stroke="#d0d0d0" stroke-width="1"/><path d="M356.5 14 V22" stroke="#d0d0d0" stroke-width="1"/><path d="M363.4 17 V22" stroke="#d0d0d0" stroke-width="1"/><path d="M370.4 17 V22" stroke="#d0d0d0" stroke-width="1"/><path d="M377.3 17 V22" stroke="#d0d0d0" stroke-width="1"/><path d="M384.2 17 V22" stroke="#d0d0d0" stroke-width="1"/><path d="M391.1 17 V22" stroke="#d0d0d0" stroke-width="1"/><path d="M398.1 17 V22" stroke="#d0d0d0" stroke-width="1"/><path d="M405.0 17 V22" stroke="#d0d0d0" stroke-width="1"/><path d="M411.9 17 V22" stroke="#d0d0d0" stroke-width="1"/><path d="M418.9 17 V22" stroke="#d0d0d0" stroke-width="1"/><path d="M425.8 14 V22" stroke="#d0d0d0" stroke-width="1"/><path d="M432.7 17 V22" stroke="#d0d0d0" stroke-width="1"/><path d="M439.7 17 V22" stroke="#d0d0d0" stroke-width="1"/><path d="M446.6 17 V22" stroke="#d0d0d0" stroke-width="1"/><path d="M453.5 17 V22" stroke="#d0d0d0" stroke-width="1"/><path d="M460.5 17 V22" stroke="#d0d0d0" stroke-width="1"/><path d="M467.4 17 V22" stroke="#d0d0d0" stroke-width="1"/><path d="M474.3 17 V22" stroke="#d0d0d0" stroke-width="1"/><path d="M481.2 17 V22" stroke="#d0d0d0" stroke-width="1"/><path d="M488.2 17 V22" stroke="#d0d0d0" stroke-width="1"/><path d="M495.1 14 V22" stroke="#d0d0d0" stroke-width="1"/><path d="M502.0 17 V22" stroke="#d0d0d0" stroke-width="1"/><path d="M509.0 17 V22" stroke="#d0d0d0" stroke-width="1"/><path d="M515.9 17 V22" stroke="#d0d0d0" stroke-width="1"/><path d="M522.8 17 V22" stroke="#d0d0d0" stroke-width="1"/><path d="M529.8 17 V22" stroke="#d0d0d0" stroke-width="1"/><path d="M536.7 17 V22" stroke="#d0d0d0" stroke-width="1"/><path d="M543.6 17 V22" stroke="#d0d0d0" stroke-width="1"/><path d="M550.5 17 V22" stroke="#d0d0d0" stroke-width="1"/><path d="M557.5 17 V22" stroke="#d0d0d0" stroke-width="1"/></svg>
<div class="a" style="left:232px;top:141px;width:8px;height:21px;background:#0593cc;border-radius:6px 0 0 6px;"></div>
<div class="a" style="left:240px;top:152px;width:1px;height:10px;background:#dcdcdc;"></div>
<div class="a t" style="left:-60px;width:600px;text-align:center;top:144px;font-size:8px;line-height:12px;color:#d8d8d8;font-weight:normal;transform:scaleX(1.1238);transform-origin:center center;">0</div>
<div class="a t" style="left:9px;width:600px;text-align:center;top:144px;font-size:8px;line-height:12px;color:#d8d8d8;font-weight:normal;transform:scaleX(0.8990);transform-origin:center center;">50</div>
<div class="a t" style="left:79px;width:600px;text-align:center;top:144px;font-size:8px;line-height:12px;color:#d8d8d8;font-weight:normal;transform:scaleX(0.8615);transform-origin:center center;">100</div>
<div class="a t" style="left:148px;width:600px;text-align:center;top:144px;font-size:8px;line-height:12px;color:#d8d8d8;font-weight:normal;transform:scaleX(0.8615);transform-origin:center center;">150</div>
<div class="a t" style="left:217px;width:600px;text-align:center;top:144px;font-size:8px;line-height:12px;color:#d8d8d8;font-weight:normal;transform:scaleX(0.8615);transform-origin:center center;">200</div>
<div class="a t" style="left:286px;width:600px;text-align:center;top:144px;font-size:8px;line-height:12px;color:#d8d8d8;font-weight:normal;transform:scaleX(0.8615);transform-origin:center center;">250</div>
<div class="a t" style="left:356px;width:600px;text-align:center;top:144px;font-size:8px;line-height:12px;color:#d8d8d8;font-weight:normal;transform:scaleX(0.8615);transform-origin:center center;">300</div>
<div class="a t" style="left:425px;width:600px;text-align:center;top:144px;font-size:8px;line-height:12px;color:#d8d8d8;font-weight:normal;transform:scaleX(0.8615);transform-origin:center center;">350</div>
<div class="a" style="left:30px;top:163px;width:200px;height:17px;background:#1b1b1b;"></div>
<div class="a" style="left:30px;top:180px;width:200px;height:1px;background:#202020;"></div>
<div class="a" style="left:230px;top:163px;width:548px;height:17px;background:#262626;"></div>
<div class="a" style="left:230px;top:180px;width:548px;height:1px;background:#1b1b1b;"></div>
<div class="a" style="left:30px;top:181px;width:200px;height:17px;background:#1b1b1b;"></div>
<div class="a" style="left:30px;top:198px;width:200px;height:1px;background:#202020;"></div>
<div class="a" style="left:230px;top:181px;width:548px;height:17px;background:#262626;"></div>
<div class="a" style="left:230px;top:198px;width:548px;height:1px;background:#1b1b1b;"></div>
<svg class="a" style="left:34px;top:188px;" width="8" height="5" viewBox="0 0 8 5"><path d="M0 0 H8 L4 5Z" fill="#cfcfcf"/></svg>
<div class="a t" style="left:54px;top:183px;font-size:11px;line-height:15px;color:#dadada;font-weight:normal;">button02</div>
<div class="a" style="left:316px;top:181px;width:143px;height:17px;background:#0479a8;"></div>
<div class="a" style="left:30px;top:199px;width:50px;height:18px;background:#262626;"></div>
<div class="a" style="left:80px;top:199px;width:150px;height:17px;background:#262626;"></div>
<div class="a" style="left:80px;top:216px;width:150px;height:1px;background:#1e1e1e;"></div>
<div class="a" style="left:230px;top:199px;width:548px;height:17px;background:#262626;"></div>
<div class="a" style="left:230px;top:216px;width:548px;height:1px;background:#1b1b1b;"></div>
<div class="a t" style="left:84px;top:200px;font-size:11px;line-height:15px;color:#dadada;font-weight:normal;">color</div>
<div class="a" style="left:316px;top:199px;width:143px;height:17px;background:#0593cc;"></div>
<div class="a" style="left:30px;top:217px;width:200px;height:17px;background:#1b1b1b;"></div>
<div class="a" style="left:30px;top:234px;width:200px;height:1px;background:#202020;"></div>
<div class="a" style="left:230px;top:217px;width:548px;height:17px;background:#262626;"></div>
<div class="a" style="left:230px;top:234px;width:548px;height:1px;background:#1b1b1b;"></div>
<svg class="a" style="left:34px;top:224px;" width="8" height="5" viewBox="0 0 8 5"><path d="M0 0 H8 L4 5Z" fill="#cfcfcf"/></svg>
<div class="a t" style="left:54px;top:219px;font-size:11px;line-height:15px;color:#dadada;font-weight:normal;">pane2</div>
<div class="a" style="left:252px;top:217px;width:478px;height:17px;background:#0479a8;"></div>
<div class="a" style="left:30px;top:235px;width:50px;height:18px;background:#262626;"></div>
<div class="a" style="left:80px;top:235px;width:150px;height:17px;background:#262626;"></div>
<div class="a" style="left:80px;top:252px;width:150px;height:1px;background:#1e1e1e;"></div>
<div class="a" style="left:230px;top:235px;width:548px;height:17px;background:#262626;"></div>
<div class="a" style="left:230px;top:252px;width:548px;height:1px;background:#1b1b1b;"></div>
<div class="a t" style="left:84px;top:236px;font-size:11px;line-height:15px;color:#dadada;font-weight:normal;">height</div>
<div class="a" style="left:252px;top:235px;width:478px;height:17px;background:#0593cc;"></div>
<div class="a" style="left:30px;top:253px;width:50px;height:18px;background:#262626;"></div>
<div class="a" style="left:80px;top:253px;width:150px;height:17px;background:#262626;"></div>
<div class="a" style="left:80px;top:270px;width:150px;height:1px;background:#1e1e1e;"></div>
<div class="a" style="left:230px;top:253px;width:548px;height:17px;background:#262626;"></div>
<div class="a" style="left:230px;top:270px;width:548px;height:1px;background:#1b1b1b;"></div>
<div class="a t" style="left:84px;top:254px;font-size:11px;line-height:15px;color:#dadada;font-weight:normal;">x</div>
<div class="a" style="left:252px;top:253px;width:478px;height:17px;background:#0593cc;"></div>
<div class="a" style="left:30px;top:271px;width:50px;height:18px;background:#262626;"></div>
<div class="a" style="left:80px;top:271px;width:150px;height:17px;background:#262626;"></div>
<div class="a" style="left:80px;top:288px;width:150px;height:1px;background:#1e1e1e;"></div>
<div class="a" style="left:230px;top:271px;width:548px;height:17px;background:#262626;"></div>
<div class="a" style="left:230px;top:288px;width:548px;height:1px;background:#1b1b1b;"></div>
<div class="a t" style="left:84px;top:272px;font-size:11px;line-height:15px;color:#dadada;font-weight:normal;">width</div>
<div class="a" style="left:252px;top:271px;width:478px;height:17px;background:#0593cc;"></div>
<div class="a" style="left:30px;top:289px;width:50px;height:18px;background:#262626;"></div>
<div class="a" style="left:80px;top:289px;width:150px;height:17px;background:#262626;"></div>
<div class="a" style="left:80px;top:306px;width:150px;height:1px;background:#1e1e1e;"></div>
<div class="a" style="left:230px;top:289px;width:548px;height:17px;background:#262626;"></div>
<div class="a" style="left:230px;top:306px;width:548px;height:1px;background:#1b1b1b;"></div>
<div class="a t" style="left:84px;top:290px;font-size:11px;line-height:15px;color:#dadada;font-weight:normal;">y</div>
<div class="a" style="left:252px;top:289px;width:478px;height:17px;background:#0593cc;"></div>
<div class="a" style="left:30px;top:307px;width:200px;height:17px;background:#1b1b1b;"></div>
<div class="a" style="left:30px;top:324px;width:200px;height:1px;background:#202020;"></div>
<div class="a" style="left:230px;top:307px;width:548px;height:17px;background:#262626;"></div>
<div class="a" style="left:230px;top:324px;width:548px;height:1px;background:#1b1b1b;"></div>
<svg class="a" style="left:34px;top:314px;" width="8" height="5" viewBox="0 0 8 5"><path d="M0 0 H8 L4 5Z" fill="#cfcfcf"/></svg>
<div class="a t" style="left:54px;top:309px;font-size:11px;line-height:15px;color:#dadada;font-weight:normal;">pane1</div>
<div class="a" style="left:252px;top:307px;width:395px;height:17px;background:#0479a8;"></div>
<div class="a" style="left:30px;top:325px;width:50px;height:18px;background:#262626;"></div>
<div class="a" style="left:80px;top:325px;width:150px;height:17px;background:#262626;"></div>
<div class="a" style="left:80px;top:342px;width:150px;height:1px;background:#1e1e1e;"></div>
<div class="a" style="left:230px;top:325px;width:548px;height:17px;background:#262626;"></div>
<div class="a" style="left:230px;top:342px;width:548px;height:1px;background:#1b1b1b;"></div>
<div class="a t" style="left:84px;top:326px;font-size:11px;line-height:15px;color:#dadada;font-weight:normal;">height</div>
<div class="a" style="left:252px;top:325px;width:395px;height:17px;background:#0593cc;"></div>
<div class="a" style="left:30px;top:343px;width:50px;height:18px;background:#262626;"></div>
<div class="a" style="left:80px;top:343px;width:150px;height:17px;background:#262626;"></div>
<div class="a" style="left:80px;top:360px;width:150px;height:1px;background:#1e1e1e;"></div>
<div class="a" style="left:230px;top:343px;width:548px;height:17px;background:#262626;"></div>
<div class="a" style="left:230px;top:360px;width:548px;height:1px;background:#1b1b1b;"></div>
<div class="a t" style="left:84px;top:344px;font-size:11px;line-height:15px;color:#dadada;font-weight:normal;">x</div>
<div class="a" style="left:252px;top:343px;width:395px;height:17px;background:#0593cc;"></div>
<div class="a" style="left:30px;top:361px;width:50px;height:18px;background:#262626;"></div>
<div class="a" style="left:80px;top:361px;width:150px;height:17px;background:#262626;"></div>
<div class="a" style="left:80px;top:378px;width:150px;height:1px;background:#1e1e1e;"></div>
<div class="a" style="left:230px;top:361px;width:548px;height:17px;background:#262626;"></div>
<div class="a" style="left:230px;top:378px;width:548px;height:1px;background:#1b1b1b;"></div>
<div class="a t" style="left:84px;top:362px;font-size:11px;line-height:15px;color:#dadada;font-weight:normal;">width</div>
<div class="a" style="left:252px;top:361px;width:395px;height:17px;background:#0593cc;"></div>
<div class="a" style="left:30px;top:379px;width:50px;height:18px;background:#262626;"></div>
<div class="a" style="left:80px;top:379px;width:150px;height:17px;background:#262626;"></div>
<div class="a" style="left:80px;top:396px;width:150px;height:1px;background:#1e1e1e;"></div>
<div class="a" style="left:230px;top:379px;width:548px;height:17px;background:#262626;"></div>
<div class="a" style="left:230px;top:396px;width:548px;height:1px;background:#1b1b1b;"></div>
<div class="a t" style="left:84px;top:380px;font-size:11px;line-height:15px;color:#dadada;font-weight:normal;">y</div>
<div class="a" style="left:252px;top:379px;width:395px;height:17px;background:#0593cc;"></div>
<div class="a" style="left:30px;top:397px;width:200px;height:17px;background:#1b1b1b;"></div>
<div class="a" style="left:30px;top:414px;width:200px;height:1px;background:#202020;"></div>
<div class="a" style="left:230px;top:397px;width:548px;height:17px;background:#262626;"></div>
<div class="a" style="left:230px;top:414px;width:548px;height:1px;background:#1b1b1b;"></div>
<svg class="a" style="left:34px;top:404px;" width="8" height="5" viewBox="0 0 8 5"><path d="M0 0 H8 L4 5Z" fill="#cfcfcf"/></svg>
<div class="a t" style="left:54px;top:399px;font-size:11px;line-height:15px;color:#dadada;font-weight:normal;">button03</div>
<div class="a" style="left:309px;top:397px;width:111px;height:17px;background:#0479a8;"></div>
<div class="a" style="left:30px;top:415px;width:50px;height:18px;background:#262626;"></div>
<div class="a" style="left:80px;top:415px;width:150px;height:17px;background:#262626;"></div>
<div class="a" style="left:80px;top:432px;width:150px;height:1px;background:#1e1e1e;"></div>
<div class="a" style="left:230px;top:415px;width:548px;height:17px;background:#262626;"></div>
<div class="a" style="left:230px;top:432px;width:548px;height:1px;background:#1b1b1b;"></div>
<div class="a t" style="left:84px;top:416px;font-size:11px;line-height:15px;color:#dadada;font-weight:normal;">color</div>
<div class="a" style="left:309px;top:415px;width:111px;height:17px;background:#0593cc;"></div>
<div class="a" style="left:30px;top:433px;width:200px;height:17px;background:#1b1b1b;"></div>
<div class="a" style="left:30px;top:450px;width:200px;height:1px;background:#202020;"></div>
<div class="a" style="left:230px;top:433px;width:548px;height:17px;background:#262626;"></div>
<div class="a" style="left:230px;top:450px;width:548px;height:1px;background:#1b1b1b;"></div>
<svg class="a" style="left:34px;top:440px;" width="8" height="5" viewBox="0 0 8 5"><path d="M0 0 H8 L4 5Z" fill="#cfcfcf"/></svg>
<div class="a t" style="left:54px;top:435px;font-size:11px;line-height:15px;color:#dadada;font-weight:normal;">button01</div>
<div class="a" style="left:309px;top:433px;width:111px;height:17px;background:#0479a8;"></div>
<div class="a" style="left:30px;top:451px;width:50px;height:18px;background:#262626;"></div>
<div class="a" style="left:80px;top:451px;width:150px;height:17px;background:#262626;"></div>
<div class="a" style="left:80px;top:468px;width:150px;height:1px;background:#1e1e1e;"></div>
<div class="a" style="left:230px;top:451px;width:548px;height:17px;background:#262626;"></div>
<div class="a" style="left:230px;top:468px;width:548px;height:1px;background:#1b1b1b;"></div>
<div class="a t" style="left:84px;top:452px;font-size:11px;line-height:15px;color:#dadada;font-weight:normal;">color</div>
<div class="a" style="left:309px;top:451px;width:111px;height:17px;background:#0593cc;"></div>
<div class="a" style="left:30px;top:469px;width:200px;height:17px;background:#1b1b1b;"></div>
<div class="a" style="left:30px;top:486px;width:200px;height:1px;background:#202020;"></div>
<div class="a" style="left:230px;top:469px;width:548px;height:17px;background:#262626;"></div>
<div class="a" style="left:230px;top:486px;width:548px;height:1px;background:#1b1b1b;"></div>
<svg class="a" style="left:34px;top:476px;" width="8" height="5" viewBox="0 0 8 5"><path d="M0 0 H8 L4 5Z" fill="#cfcfcf"/></svg>
<div class="a t" style="left:54px;top:471px;font-size:11px;line-height:15px;color:#dadada;font-weight:normal;">pane3</div>
<div class="a" style="left:259px;top:469px;width:415px;height:17px;background:#0479a8;"></div>
<div class="a" style="left:30px;top:487px;width:50px;height:18px;background:#262626;"></div>
<div class="a" style="left:80px;top:487px;width:150px;height:17px;background:#262626;"></div>
<div class="a" style="left:80px;top:504px;width:150px;height:1px;background:#1e1e1e;"></div>
<div class="a" style="left:230px;top:487px;width:548px;height:17px;background:#262626;"></div>
<div class="a" style="left:230px;top:504px;width:548px;height:1px;background:#1b1b1b;"></div>
<div class="a t" style="left:84px;top:488px;font-size:11px;line-height:15px;color:#dadada;font-weight:normal;">height</div>
<div class="a" style="left:259px;top:487px;width:415px;height:17px;background:#0593cc;"></div>
<div class="a" style="left:30px;top:505px;width:50px;height:18px;background:#262626;"></div>
<div class="a" style="left:80px;top:505px;width:150px;height:17px;background:#262626;"></div>
<div class="a" style="left:80px;top:522px;width:150px;height:1px;background:#1e1e1e;"></div>
<div class="a" style="left:230px;top:505px;width:548px;height:17px;background:#262626;"></div>
<div class="a" style="left:230px;top:522px;width:548px;height:1px;background:#1b1b1b;"></div>
<div class="a t" style="left:84px;top:506px;font-size:11px;line-height:15px;color:#dadada;font-weight:normal;">x</div>
<div class="a" style="left:259px;top:505px;width:415px;height:17px;background:#0593cc;"></div>
<div class="a" style="left:30px;top:523px;width:50px;height:18px;background:#262626;"></div>
<div class="a" style="left:80px;top:523px;width:150px;height:17px;background:#262626;"></div>
<div class="a" style="left:80px;top:540px;width:150px;height:1px;background:#1e1e1e;"></div>
<div class="a" style="left:230px;top:523px;width:548px;height:17px;background:#262626;"></div>
<div class="a" style="left:230px;top:540px;width:548px;height:1px;background:#1b1b1b;"></div>
<div class="a t" style="left:84px;top:524px;font-size:11px;line-height:15px;color:#dadada;font-weight:normal;">width</div>
<div class="a" style="left:259px;top:523px;width:415px;height:17px;background:#0593cc;"></div>
<div class="a" style="left:30px;top:541px;width:50px;height:18px;background:#262626;"></div>
<div class="a" style="left:80px;top:541px;width:150px;height:17px;background:#262626;"></div>
<div class="a" style="left:80px;top:558px;width:150px;height:1px;background:#1e1e1e;"></div>
<div class="a" style="left:230px;top:541px;width:548px;height:17px;background:#262626;"></div>
<div class="a" style="left:230px;top:558px;width:548px;height:1px;background:#1b1b1b;"></div>
<div class="a t" style="left:84px;top:542px;font-size:11px;line-height:15px;color:#dadada;font-weight:normal;">y</div>
<div class="a" style="left:259px;top:541px;width:415px;height:17px;background:#0593cc;"></div>
<div class="a" style="left:30px;top:559px;width:200px;height:17px;background:#1b1b1b;"></div>
<div class="a" style="left:30px;top:576px;width:200px;height:1px;background:#202020;"></div>
<div class="a" style="left:230px;top:559px;width:548px;height:17px;background:#262626;"></div>
<div class="a" style="left:230px;top:576px;width:548px;height:1px;background:#1b1b1b;"></div>
<div class="a" style="left:30px;top:577px;width:759px;height:92px;background:#26272a;"></div>
<div class="a" style="left:30px;top:669px;width:759px;height:42px;background:#262626;"></div>
<div class="a" style="left:779px;top:163px;width:10px;height:506px;background:#5f5f5f;"></div>
<div class="a" style="left:230px;top:669px;width:559px;height:10px;background:#1b1b1b;"></div>
<div class="a" style="left:230px;top:669px;width:30px;height:10px;background:#5c5c5c;"></div>
<div class="a" style="left:1545px;top:45px;width:375px;height:20px;background:#27282b;"></div>
<div class="a" style="left:1546px;top:46px;width:81px;height:19px;background:#dadada;"></div>
<div class="a t" style="left:1554px;top:48px;font-size:11px;line-height:15px;color:#2a2a2a;font-weight:normal;transform:scaleX(0.9175);transform-origin:left center;">Properties</div>
<svg class="a" style="left:1610px;top:51px;" width="10" height="10" viewBox="0 0 10 10"><path d="M0.5 0.5 L9.5 9.5 M9.5 0.5 L0.5 9.5" stroke="#3a3a3a" stroke-width="1.1"/></svg>
<svg class="a" style="left:1865px;top:52px;" width="14" height="8" viewBox="0 0 14 8"><path d="M0.8 0.8 L7 7 L13.2 0.8" fill="none" stroke="#c8c8c8" stroke-width="1.15"/></svg>
<svg class="a" style="left:1883px;top:49px;" width="15" height="13" viewBox="0 0 15 13"><rect x="1.5" y="0.5" width="10.5" height="12" rx="2.5" fill="none" stroke="#c8c8c8" stroke-width="1.1"/><rect x="10" y="1.5" width="4.6" height="4.6" fill="#27282b" stroke="#c8c8c8" stroke-width="1"/></svg>
<svg class="a" style="left:1904px;top:50px;" width="11" height="11" viewBox="0 0 11 11"><path d="M0.8 0.8 L10.2 10.2 M10.2 0.8 L0.8 10.2" stroke="#c8c8c8" stroke-width="1.1"/></svg>
<div class="a" style="left:1546px;top:65px;width:374px;height:2px;background:#e6e6e6;"></div>
<div class="a" style="left:1546px;top:67px;width:374px;height:370px;background:#262626;"></div>
<div class="a" style="left:1910px;top:67px;width:10px;height:370px;background:#1b1b1b;"></div>
<div class="a" style="left:1910px;top:67px;width:10px;height:233px;background:#5a5a5a;"></div>
<div class="a" style="left:1546px;top:67px;width:364px;height:19px;background:#1b1b1b;"></div>
<svg class="a" style="left:1550px;top:75px;" width="8" height="5" viewBox="0 0 8 5"><path d="M0 0 H8 L4 5Z" fill="#bdbdbd"/></svg>
<div class="a t" style="left:1568px;top:70px;font-size:12px;line-height:16px;color:#ffffff;font-weight:bold;transform:scaleX(0.9772);transform-origin:left center;">Type</div>
<div class="a t" style="left:1554px;top:94px;font-size:12px;line-height:16px;color:#dadada;font-weight:normal;transform:scaleX(0.9801);transform-origin:left center;">Type</div>
<div class="a" style="left:1636px;top:90px;width:244px;height:22px;background:#353535;"></div>
<div class="a t" style="left:1640px;top:94px;font-size:12px;line-height:16px;color:#dadada;font-weight:normal;transform:scaleX(1.0926);transform-origin:left center;">Item</div>
<div class="a t" style="left:1554px;top:120px;font-size:12px;line-height:16px;color:#dadada;font-weight:normal;transform:scaleX(1.0171);transform-origin:left center;">id</div>
<div class="a" style="left:1636px;top:116px;width:244px;height:22px;background:#262626;box-sizing:border-box;border:1px solid #3c3c3c;"></div>
<div class="a t" style="left:1640px;top:120px;font-size:12px;line-height:16px;color:#dadada;font-weight:normal;transform:scaleX(1.0892);transform-origin:left center;">element</div>
<svg class="a" style="left:1885px;top:118px;" width="18" height="18" viewBox="0 0 18 18"><path d="M3.5 4.5 A7 7 0 1 1 3.5 13.5" fill="none" stroke="#dadada" stroke-width="1.2"/><path d="M13 9 H5.5 M8.5 6 L5.5 9 L8.5 12" fill="none" stroke="#dadada" stroke-width="1.4"/></svg>
<div class="a t" style="left:1554px;top:146px;font-size:12px;line-height:16px;color:#dadada;font-weight:normal;transform:scaleX(1.0274);transform-origin:left center;">Custom id</div>
<div class="a" style="left:1636px;top:142px;width:244px;height:22px;background:#262626;box-sizing:border-box;border:1px solid #3c3c3c;"></div>
<div class="a t" style="left:1458px;width:600px;text-align:center;top:146px;font-size:11px;line-height:15px;color:#ffffff;font-weight:normal;transform:scaleX(0.9649);transform-origin:center center;">Add Annotation</div>
<div class="a" style="left:1546px;top:168px;width:364px;height:19px;background:#1b1b1b;"></div>
<svg class="a" style="left:1550px;top:176px;" width="8" height="5" viewBox="0 0 8 5"><path d="M0 0 H8 L4 5Z" fill="#bdbdbd"/></svg>
<div class="a t" style="left:1568px;top:171px;font-size:12px;line-height:16px;color:#ffffff;font-weight:bold;transform:scaleX(1.0085);transform-origin:left center;">Geometry</div>
<div class="a t" style="left:1554px;top:196px;font-size:12px;line-height:16px;color:#dadada;font-weight:normal;transform:scaleX(1.0775);transform-origin:left center;">Position</div>
<div class="a t" style="left:1636px;top:196px;font-size:12px;line-height:16px;color:#dadada;font-weight:normal;transform:scaleX(0.9370);transform-origin:left center;">X</div>
<div class="a" style="left:1673px;top:192px;width:75px;height:22px;background:#262626;box-sizing:border-box;border:1px solid #3c3c3c;"></div>
<div class="a" style="left:1688px;top:192px;width:1px;height:22px;background:#3c3c3c;"></div>
<svg class="a" style="left:1676px;top:195px;" width="9" height="16" viewBox="0 0 9 16"><path d="M1 4.5 L4.5 1 L8 4.5 M1 11.5 L4.5 15 L8 11.5" fill="none" stroke="#6a6a6a" stroke-width="1"/></svg>
<div class="a t" style="left:1145px;width:600px;text-align:right;top:196px;font-size:12px;line-height:16px;color:#dadada;font-weight:normal;transform:scaleX(1.0488);transform-origin:right center;">0</div>
<div class="a t" style="left:1760px;top:196px;font-size:12px;line-height:16px;color:#dadada;font-weight:normal;transform:scaleX(0.9370);transform-origin:left center;">Y</div>
<div class="a" style="left:1797px;top:192px;width:75px;height:22px;background:#262626;box-sizing:border-box;border:1px solid #3c3c3c;"></div>
<div class="a" style="left:1812px;top:192px;width:1px;height:22px;background:#3c3c3c;"></div>
<svg class="a" style="left:1800px;top:195px;" width="9" height="16" viewBox="0 0 9 16"><path d="M1 4.5 L4.5 1 L8 4.5 M1 11.5 L4.5 15 L8 11.5" fill="none" stroke="#6a6a6a" stroke-width="1"/></svg>
<div class="a t" style="left:1269px;width:600px;text-align:right;top:196px;font-size:12px;line-height:16px;color:#dadada;font-weight:normal;transform:scaleX(1.0488);transform-origin:right center;">0</div>
<div class="a t" style="left:1554px;top:222px;font-size:12px;line-height:16px;color:#dadada;font-weight:normal;transform:scaleX(0.9638);transform-origin:left center;">Size</div>
<div class="a t" style="left:1636px;top:222px;font-size:12px;line-height:16px;color:#dadada;font-weight:normal;transform:scaleX(0.9712);transform-origin:left center;">W</div>
<div class="a" style="left:1673px;top:218px;width:75px;height:22px;background:#262626;box-sizing:border-box;border:1px solid #3c3c3c;"></div>
<div class="a" style="left:1688px;top:218px;width:1px;height:22px;background:#3c3c3c;"></div>
<svg class="a" style="left:1676px;top:221px;" width="9" height="16" viewBox="0 0 9 16"><path d="M1 4.5 L4.5 1 L8 4.5 M1 11.5 L4.5 15 L8 11.5" fill="none" stroke="#6a6a6a" stroke-width="1"/></svg>
<div class="a t" style="left:1145px;width:600px;text-align:right;top:222px;font-size:12px;line-height:16px;color:#dadada;font-weight:normal;transform:scaleX(0.9990);transform-origin:right center;">1.280</div>
<div class="a t" style="left:1760px;top:222px;font-size:12px;line-height:16px;color:#dadada;font-weight:normal;transform:scaleX(0.9808);transform-origin:left center;">H</div>
<div class="a" style="left:1797px;top:218px;width:75px;height:22px;background:#262626;box-sizing:border-box;border:1px solid #3c3c3c;"></div>
<div class="a" style="left:1812px;top:218px;width:1px;height:22px;background:#3c3c3c;"></div>
<svg class="a" style="left:1800px;top:221px;" width="9" height="16" viewBox="0 0 9 16"><path d="M1 4.5 L4.5 1 L8 4.5 M1 11.5 L4.5 15 L8 11.5" fill="none" stroke="#6a6a6a" stroke-width="1"/></svg>
<div class="a t" style="left:1269px;width:600px;text-align:right;top:222px;font-size:12px;line-height:16px;color:#dadada;font-weight:normal;transform:scaleX(0.9989);transform-origin:right center;">720</div>
<div class="a" style="left:1546px;top:244px;width:364px;height:19px;background:#1b1b1b;"></div>
<svg class="a" style="left:1550px;top:252px;" width="8" height="5" viewBox="0 0 8 5"><path d="M0 0 H8 L4 5Z" fill="#bdbdbd"/></svg>
<div class="a t" style="left:1568px;top:247px;font-size:12px;line-height:16px;color:#ffffff;font-weight:bold;transform:scaleX(0.9770);transform-origin:left center;">Visibility</div>
<div class="a t" style="left:1554px;top:272px;font-size:12px;line-height:16px;color:#dadada;font-weight:normal;transform:scaleX(1.0898);transform-origin:left center;">Visibility</div>
<div class="a" style="left:1657px;top:268px;width:22px;height:22px;background:#262626;box-sizing:border-box;border:1px solid #3c3c3c;"></div>
<svg class="a" style="left:1661px;top:272px;" width="14" height="12" viewBox="0 0 14 12"><path d="M1.5 6 L5 9.5 L12.5 1.5" fill="none" stroke="#ffffff" stroke-width="2"/></svg>
<div class="a t" style="left:1686px;top:272px;font-size:12px;line-height:16px;color:#dadada;font-weight:normal;transform:scaleX(1.0146);transform-origin:left center;">Is Visible</div>
<div class="a" style="left:1774px;top:268px;width:22px;height:22px;background:#262626;box-sizing:border-box;border:1px solid #3c3c3c;"></div>
<div class="a t" style="left:1803px;top:272px;font-size:12px;line-height:16px;color:#dadada;font-weight:normal;transform:scaleX(0.9433);transform-origin:left center;">Clip</div>
<div class="a t" style="left:1554px;top:298px;font-size:12px;line-height:16px;color:#dadada;font-weight:normal;transform:scaleX(1.0570);transform-origin:left center;">Opacity</div>
<div class="a" style="left:1657px;top:294px;width:75px;height:22px;background:#262626;box-sizing:border-box;border:1px solid #3c3c3c;"></div>
<div class="a" style="left:1672px;top:294px;width:1px;height:22px;background:#3c3c3c;"></div>
<div class="a" style="left:1711px;top:294px;width:1px;height:22px;background:#3c3c3c;"></div>
<svg class="a" style="left:1660px;top:297px;" width="9" height="16" viewBox="0 0 9 16"><path d="M1 4.5 L4.5 1 L8 4.5 M1 11.5 L4.5 15 L8 11.5" fill="none" stroke="#4e4e4e" stroke-width="1"/></svg>
<div class="a t" style="left:1684px;top:298px;font-size:12px;line-height:16px;color:#dadada;font-weight:normal;transform:scaleX(0.9848);transform-origin:left center;">1,00</div>
<svg class="a" style="left:1715px;top:301px;" width="13" height="7" viewBox="0 0 13 7"><path d="M0.5 0.5 L6.5 6 L12.5 0.5" fill="none" stroke="#cfcfcf" stroke-width="1.1"/></svg>
<div class="a" style="left:1546px;top:324px;width:364px;height:22px;background:#111111;"></div>
<div class="a" style="left:1546px;top:324px;width:125px;height:22px;background:#dadada;"></div>
<div class="a t" style="left:1308px;width:600px;text-align:center;top:328px;font-size:12px;line-height:16px;color:#1b1b1b;font-weight:bold;transform:scaleX(1.0943);transform-origin:center center;">Item</div>
<div class="a t" style="left:1433px;width:600px;text-align:center;top:328px;font-size:12px;line-height:16px;color:#ffffff;font-weight:bold;transform:scaleX(0.9406);transform-origin:center center;">Layout</div>
<div class="a t" style="left:1558px;width:600px;text-align:center;top:328px;font-size:12px;line-height:16px;color:#ffffff;font-weight:bold;transform:scaleX(0.9590);transform-origin:center center;">Advanced</div>
<div class="a" style="left:1546px;top:346px;width:364px;height:4px;background:#e6e6e6;"></div>
<div class="a" style="left:1545px;top:436px;width:375px;height:1px;background:#3a3a3a;"></div>
<div class="a" style="left:1545px;top:437px;width:375px;height:20px;background:#27282b;"></div>
<div class="a" style="left:1546px;top:437px;width:108px;height:20px;background:#dadada;"></div>
<div class="a t" style="left:1554px;top:440px;font-size:11px;line-height:15px;color:#2a2a2a;font-weight:normal;transform:scaleX(0.9350);transform-origin:left center;">Connection View</div>
<svg class="a" style="left:1637px;top:442px;" width="10" height="10" viewBox="0 0 10 10"><path d="M0.5 0.5 L9.5 9.5 M9.5 0.5 L0.5 9.5" stroke="#3a3a3a" stroke-width="1.1"/></svg>
<svg class="a" style="left:1865px;top:444px;" width="14" height="8" viewBox="0 0 14 8"><path d="M0.8 0.8 L7 7 L13.2 0.8" fill="none" stroke="#c8c8c8" stroke-width="1.15"/></svg>
<svg class="a" style="left:1883px;top:441px;" width="15" height="13" viewBox="0 0 15 13"><rect x="1.5" y="0.5" width="10.5" height="12" rx="2.5" fill="none" stroke="#c8c8c8" stroke-width="1.1"/><rect x="10" y="1.5" width="4.6" height="4.6" fill="#27282b" stroke="#c8c8c8" stroke-width="1"/></svg>
<svg class="a" style="left:1904px;top:442px;" width="11" height="11" viewBox="0 0 11 11"><path d="M0.8 0.8 L10.2 10.2 M10.2 0.8 L0.8 10.2" stroke="#c8c8c8" stroke-width="1.1"/></svg>
<div class="a" style="left:1546px;top:457px;width:374px;height:2px;background:#e6e6e6;"></div>
<div class="a" style="left:1546px;top:459px;width:374px;height:22px;background:#262626;"></div>
<div class="a" style="left:1546px;top:459px;width:92px;height:22px;background:#dadada;"></div>
<div class="a t" style="left:1292px;width:600px;text-align:center;top:463px;font-size:11px;line-height:15px;color:#1b1b1b;font-weight:bold;transform:scaleX(0.8857);transform-origin:center center;">Connections</div>
<div class="a" style="left:1638px;top:459px;width:184px;height:22px;background:#111111;"></div>
<div class="a t" style="left:1384px;width:600px;text-align:center;top:463px;font-size:11px;line-height:15px;color:#ffffff;font-weight:bold;transform:scaleX(0.8926);transform-origin:center center;">Bindings</div>
<div class="a t" style="left:1476px;width:600px;text-align:center;top:463px;font-size:11px;line-height:15px;color:#ffffff;font-weight:bold;transform:scaleX(0.9189);transform-origin:center center;">Properties</div>
<div class="a" style="left:1546px;top:481px;width:374px;height:4px;background:#e6e6e6;"></div>
<div class="a" style="left:1546px;top:485px;width:374px;height:24px;background:#1b1b1b;"></div>
<svg class="a" style="left:1553px;top:491px;" width="12" height="12" viewBox="0 0 12 12"><path d="M6 0 V12 M0 6 H12" stroke="#e6e6e6" stroke-width="1.8"/></svg>
<svg class="a" style="left:1577px;top:496px;" width="12" height="2" viewBox="0 0 12 2"><path d="M0 1 H12" stroke="#6a6a6a" stroke-width="1.4"/></svg>
<div class="a" style="left:1546px;top:509px;width:374px;height:228px;background:#262626;"></div>
<div class="a" style="left:1546px;top:509px;width:374px;height:20px;background:#464646;"></div>
<div class="a" style="left:1625px;top:509px;width:1px;height:20px;background:#2e2e2e;"></div>
<div class="a" style="left:1785px;top:509px;width:1px;height:20px;background:#2e2e2e;"></div>
<div class="a t" style="left:1285px;width:600px;text-align:center;top:512px;font-size:11px;line-height:15px;color:#dadada;font-weight:normal;transform:scaleX(1.0140);transform-origin:center center;">Target</div>
<div class="a t" style="left:1405px;width:600px;text-align:center;top:512px;font-size:11px;line-height:15px;color:#dadada;font-weight:normal;transform:scaleX(0.9562);transform-origin:center center;">Signal Handler</div>
<div class="a t" style="left:1565px;width:600px;text-align:center;top:512px;font-size:11px;line-height:15px;color:#dadada;font-weight:normal;transform:scaleX(0.9813);transform-origin:center center;">Action</div>
<div class="a t" style="left:1553px;top:537px;font-size:11px;line-height:15px;color:#dadada;font-weight:normal;transform:scaleX(0.9926);transform-origin:left center;">area01</div>
<div class="a t" style="left:1633px;top:537px;font-size:11px;line-height:15px;color:#dadada;font-weight:normal;transform:scaleX(0.9316);transform-origin:left center;">onClicked</div>
<div class="a t" style="left:1793px;top:537px;font-size:11px;line-height:15px;color:#dadada;font-weight:normal;transform:scaleX(0.9900);transform-origin:left center;">element.state = "State1"</div>
<div class="a t" style="left:1553px;top:567px;font-size:11px;line-height:15px;color:#dadada;font-weight:normal;transform:scaleX(0.9926);transform-origin:left center;">area02</div>
<div class="a t" style="left:1633px;top:567px;font-size:11px;line-height:15px;color:#dadada;font-weight:normal;transform:scaleX(0.9316);transform-origin:left center;">onClicked</div>
<div class="a t" style="left:1793px;top:567px;font-size:11px;line-height:15px;color:#dadada;font-weight:normal;transform:scaleX(0.9900);transform-origin:left center;">element.state = "State2"</div>
<div class="a t" style="left:1553px;top:597px;font-size:11px;line-height:15px;color:#dadada;font-weight:normal;transform:scaleX(0.9926);transform-origin:left center;">area03</div>
<div class="a t" style="left:1633px;top:597px;font-size:11px;line-height:15px;color:#dadada;font-weight:normal;transform:scaleX(0.9316);transform-origin:left center;">onClicked</div>
<div class="a t" style="left:1793px;top:597px;font-size:11px;line-height:15px;color:#dadada;font-weight:normal;transform:scaleX(0.9900);transform-origin:left center;">element.state = "State3"</div>
<div class="a" style="left:1546px;top:737px;width:374px;height:11px;background:#1b1b1b;"></div>
<div class="a" style="left:1546px;top:737px;width:249px;height:11px;background:#5a5a5a;"></div>
<div class="a" style="left:38px;top:748px;width:1882px;height:20px;background:#27282b;"></div>
<div class="a" style="left:38px;top:748px;width:1882px;height:1px;background:#3a3a3a;"></div>
<div class="a" style="left:39px;top:749px;width:58px;height:19px;background:#1b1b1b;"></div>
<div class="a t" style="left:47px;top:751px;font-size:11px;line-height:15px;color:#dadada;font-weight:normal;transform:scaleX(0.9475);transform-origin:left center;">Timeline</div>
<div class="a" style="left:97px;top:749px;width:62px;height:19px;background:#dadada;"></div>
<div class="a t" style="left:105px;top:751px;font-size:11px;line-height:15px;color:#2a2a2a;font-weight:normal;transform:scaleX(0.9941);transform-origin:left center;">States</div>
<svg class="a" style="left:142px;top:753px;" width="10" height="10" viewBox="0 0 10 10"><path d="M0.5 0.5 L9.5 9.5 M9.5 0.5 L0.5 9.5" stroke="#3a3a3a" stroke-width="1.1"/></svg>
<svg class="a" style="left:1865px;top:754px;" width="14" height="8" viewBox="0 0 14 8"><path d="M0.8 0.8 L7 7 L13.2 0.8" fill="none" stroke="#c8c8c8" stroke-width="1.15"/></svg>
<svg class="a" style="left:1883px;top:751px;" width="15" height="13" viewBox="0 0 15 13"><rect x="1.5" y="0.5" width="10.5" height="12" rx="2.5" fill="none" stroke="#c8c8c8" stroke-width="1.1"/><rect x="10" y="1.5" width="4.6" height="4.6" fill="#27282b" stroke="#c8c8c8" stroke-width="1"/></svg>
<svg class="a" style="left:1904px;top:752px;" width="11" height="11" viewBox="0 0 11 11"><path d="M0.8 0.8 L10.2 10.2 M10.2 0.8 L0.8 10.2" stroke="#c8c8c8" stroke-width="1.1"/></svg>
<div class="a" style="left:39px;top:768px;width:1881px;height:2px;background:#e6e6e6;"></div>
<div class="a" style="left:38px;top:770px;width:1882px;height:258px;background:#262626;"></div>
<div class="a" style="left:1910px;top:770px;width:10px;height:233px;background:#5a5a5a;"></div>
<div class="a" style="left:1910px;top:1003px;width:10px;height:25px;background:#1b1b1b;"></div>
<div class="a" style="left:305px;top:772px;width:1px;height:254px;background:#bdbdbd;"></div>
<div class="a" style="left:306px;top:772px;width:1px;height:254px;background:#9a9a9a;"></div>
<div class="a" style="left:57px;top:788px;width:232px;height:232px;background:#2f2f2f;"></div>
<div class="a" style="left:82px;top:792px;width:132px;height:22px;background:#222222;box-sizing:border-box;border:1px solid #3a3a3a;"></div>
<div class="a t" style="left:86px;top:795px;font-size:13px;line-height:17px;color:#ebebeb;font-weight:normal;transform:scaleX(0.9836);transform-origin:left center;">base state</div>
<div class="a" style="left:57px;top:818px;width:232px;height:2px;background:#bdbdbd;"></div>
<svg class="a" style="left:72px;top:862px;" width="202" height="115" viewBox="0 0 202 115"><rect x="0.5" y="0.5" width="201" height="114" fill="#5d5b5c" stroke="#d4d4d4" stroke-width="1.2"/><rect x="1" y="1" width="200" height="12" fill="#3d3b3a"/><rect x="58.5" y="2.5" width="28" height="10" fill="#231f1e"/><text x="72.5" y="10" text-anchor="middle" font-size="6" font-weight="bold" letter-spacing="-0.3" font-family="Liberation Sans" fill="#f0f0f0">State 01</text><rect x="86.5" y="2.5" width="28" height="10" fill="#231f1e"/><text x="100.5" y="10" text-anchor="middle" font-size="6" font-weight="bold" letter-spacing="-0.3" font-family="Liberation Sans" fill="#f0f0f0">State 02</text><rect x="114.5" y="2.5" width="28" height="10" fill="#231f1e"/><text x="128.5" y="10" text-anchor="middle" font-size="6" font-weight="bold" letter-spacing="-0.3" font-family="Liberation Sans" fill="#f0f0f0">State 03</text><polygon points="20,38 184,38 192,46 192,97 184,105 20,105 12,97 12,46" fill="#3d3b3a"/><text x="17" y="51" font-size="8" font-family="Liberation Sans" fill="#f0f0f0">02</text></svg>
<div class="a" style="left:321px;top:786px;width:236px;height:236px;background:#f5e800;"></div>
<div class="a" style="left:323px;top:788px;width:232px;height:232px;background:#2f2f2f;"></div>
<div class="a" style="left:348px;top:792px;width:132px;height:22px;background:#222222;box-sizing:border-box;border:1px solid #3a3a3a;"></div>
<div class="a t" style="left:352px;top:795px;font-size:13px;line-height:17px;color:#ebebeb;font-weight:normal;transform:scaleX(0.9844);transform-origin:left center;">State1</div>
<div class="a" style="left:323px;top:818px;width:232px;height:2px;background:#bdbdbd;"></div>
<svg class="a" style="left:338px;top:862px;" width="202" height="115" viewBox="0 0 202 115"><rect x="0.5" y="0.5" width="201" height="114" fill="#5d5b5c" stroke="#d4d4d4" stroke-width="1.2"/><rect x="1" y="1" width="200" height="12" fill="#3d3b3a"/><rect x="58.5" y="2.5" width="28" height="10" fill="#5d5b5c"/><text x="72.5" y="10" text-anchor="middle" font-size="6" font-weight="bold" letter-spacing="-0.3" font-family="Liberation Sans" fill="#f0f0f0">State 01</text><rect x="86.5" y="2.5" width="28" height="10" fill="#231f1e"/><text x="100.5" y="10" text-anchor="middle" font-size="6" font-weight="bold" letter-spacing="-0.3" font-family="Liberation Sans" fill="#f0f0f0">State 02</text><rect x="114.5" y="2.5" width="28" height="10" fill="#231f1e"/><text x="128.5" y="10" text-anchor="middle" font-size="6" font-weight="bold" letter-spacing="-0.3" font-family="Liberation Sans" fill="#f0f0f0">State 03</text><polygon points="96,17 201,17 201,82 191,82 191,96 184,103 19,103 12,96 12,45 19,38 90,38 90,23" fill="#3d3b3a"/><rect x="1" y="13" width="200" height="4" fill="#5d5b5c"/><text x="18" y="51" font-size="8" font-family="Liberation Sans" fill="#f0f0f0">02</text><text x="94" y="29" font-size="8" font-family="Liberation Sans" fill="#f0f0f0">01</text><text x="132" y="29" font-size="8" font-family="Liberation Sans" fill="#f0f0f0">03</text></svg>
<div class="a t" style="left:498.5px;top:795px;font-size:13px;line-height:17px;color:#ffffff;font-weight:normal;transform:scaleX(0.9832);transform-origin:left center;"><i>Default</i></div>
<div class="a" style="left:571px;top:772px;width:268px;height:254px;background:#bdbdbd;"></div>
<div class="a" style="left:573px;top:772px;width:264px;height:254px;background:#0593cc;"></div>
<div class="a" style="left:589px;top:788px;width:232px;height:232px;background:#2f2f2f;"></div>
<div class="a" style="left:614px;top:792px;width:132px;height:22px;background:#222222;box-sizing:border-box;border:1px solid #3a3a3a;"></div>
<div class="a t" style="left:618px;top:795px;font-size:13px;line-height:17px;color:#ebebeb;font-weight:normal;transform:scaleX(1.0110);transform-origin:left center;">State2</div>
<div class="a" style="left:589px;top:818px;width:232px;height:2px;background:#bdbdbd;"></div>
<svg class="a" style="left:604px;top:862px;" width="202" height="115" viewBox="0 0 202 115"><rect x="0.5" y="0.5" width="201" height="114" fill="#5d5b5c" stroke="#d4d4d4" stroke-width="1.2"/><rect x="1" y="1" width="200" height="12" fill="#3d3b3a"/><rect x="58.5" y="2.5" width="28" height="10" fill="#231f1e"/><text x="72.5" y="10" text-anchor="middle" font-size="6" font-weight="bold" letter-spacing="-0.3" font-family="Liberation Sans" fill="#f0f0f0">State 01</text><rect x="86.5" y="2.5" width="28" height="10" fill="#5d5b5c"/><text x="100.5" y="10" text-anchor="middle" font-size="6" font-weight="bold" letter-spacing="-0.3" font-family="Liberation Sans" fill="#f0f0f0">State 02</text><rect x="114.5" y="2.5" width="28" height="10" fill="#231f1e"/><text x="128.5" y="10" text-anchor="middle" font-size="6" font-weight="bold" letter-spacing="-0.3" font-family="Liberation Sans" fill="#f0f0f0">State 03</text><polygon points="70,17 201,17 201,82 191,82 191,96 184,103 19,103 12,96 12,45 19,38 64,38 64,23" fill="#3d3b3a"/><rect x="1" y="13" width="200" height="4" fill="#5d5b5c"/><text x="18" y="51" font-size="8" font-family="Liberation Sans" fill="#f0f0f0">02</text><text x="68" y="29" font-size="8" font-family="Liberation Sans" fill="#f0f0f0">01</text><text x="128" y="29" font-size="8" font-family="Liberation Sans" fill="#f0f0f0">03</text></svg>
<div class="a" style="left:809px;top:778px;width:22px;height:22px;background:#1e1e1e;box-sizing:border-box;border:1px solid #3a3a3a;"></div>
<svg class="a" style="left:815px;top:784px;" width="10" height="10" viewBox="0 0 10 10"><path d="M1 1 L9 9 M9 1 L1 9" stroke="#fff" stroke-width="2"/></svg>
<div class="a" style="left:855px;top:788px;width:232px;height:232px;background:#2f2f2f;"></div>
<div class="a" style="left:880px;top:792px;width:132px;height:22px;background:#222222;box-sizing:border-box;border:1px solid #3a3a3a;"></div>
<div class="a t" style="left:884px;top:795px;font-size:13px;line-height:17px;color:#ebebeb;font-weight:normal;transform:scaleX(1.0110);transform-origin:left center;">State3</div>
<div class="a" style="left:855px;top:818px;width:232px;height:2px;background:#bdbdbd;"></div>
<svg class="a" style="left:870px;top:862px;" width="202" height="115" viewBox="0 0 202 115"><rect x="0.5" y="0.5" width="201" height="114" fill="#5d5b5c" stroke="#d4d4d4" stroke-width="1.2"/><rect x="1" y="1" width="200" height="12" fill="#3d3b3a"/><rect x="58.5" y="2.5" width="28" height="10" fill="#231f1e"/><text x="72.5" y="10" text-anchor="middle" font-size="6" font-weight="bold" letter-spacing="-0.3" font-family="Liberation Sans" fill="#f0f0f0">State 01</text><rect x="86.5" y="2.5" width="28" height="10" fill="#231f1e"/><text x="100.5" y="10" text-anchor="middle" font-size="6" font-weight="bold" letter-spacing="-0.3" font-family="Liberation Sans" fill="#f0f0f0">State 02</text><rect x="114.5" y="2.5" width="28" height="10" fill="#5d5b5c"/><text x="128.5" y="10" text-anchor="middle" font-size="6" font-weight="bold" letter-spacing="-0.3" font-family="Liberation Sans" fill="#f0f0f0">State 03</text><polygon points="69,17 201,17 201,82 191,82 191,96 184,103 19,103 12,96 12,45 19,38 63,38 63,23" fill="#3d3b3a"/><rect x="1" y="13" width="200" height="4" fill="#5d5b5c"/><text x="18" y="51" font-size="8" font-family="Liberation Sans" fill="#f0f0f0">02</text><text x="69" y="29" font-size="8" font-family="Liberation Sans" fill="#f0f0f0">01</text><text x="93" y="29" font-size="8" font-family="Liberation Sans" fill="#f0f0f0">03</text></svg>
<div class="a" style="left:1778px;top:862px;width:124px;height:80px;background:#262626;box-sizing:border-box;border:1px solid #3c3c3c;"></div>
<div class="a t" style="left:1540px;width:600px;text-align:center;top:894px;font-size:13px;line-height:17px;color:#e8e8e8;font-weight:normal;transform:scaleX(0.9844);transform-origin:center center;"><i>Create New State</i></div>
<div class="a" style="left:38px;top:1027px;width:1882px;height:23px;background:#1b1b1b;"></div>
<svg class="a" style="left:46px;top:1034px;" width="13" height="13" viewBox="0 0 13 13"><rect x="1.5" y="1.5" width="10" height="10" fill="none" stroke="#8a8a8a" stroke-width="1.2"/><rect x="1" y="1" width="5" height="11" fill="#8a8a8a"/></svg>
<div class="a" style="left:71px;top:1030px;width:200px;height:20px;background:#262626;"></div>
<svg class="a" style="left:76px;top:1032px;" width="18" height="16" viewBox="0 0 18 16"><circle cx="9.5" cy="6.3" r="4.2" fill="none" stroke="#b0b0b0" stroke-width="1.3"/><path d="M6.5 9.5 L2.5 13.8" stroke="#b0b0b0" stroke-width="1.6"/><path d="M12 13 H16 L14 15Z" fill="#b0b0b0"/></svg>
<div class="a t" style="left:98px;top:1034px;font-size:11px;line-height:15px;color:#8a8a8a;font-weight:normal;transform:scaleX(0.9386);transform-origin:left center;">Type to locate (Ctrl+K)</div>
<div class="a" style="left:274px;top:1031px;width:1px;height:19px;background:#3a3a3a;"></div>
<div class="a" style="left:703px;top:1030px;width:110px;height:20px;background:#262626;"></div>
<div class="a t" style="left:285px;top:1034px;font-size:11px;line-height:15px;color:#dadada;font-weight:normal;">1</div>
<div class="a t" style="left:298px;top:1034px;font-size:11px;line-height:15px;color:#dadada;font-weight:normal;transform:scaleX(0.9436);transform-origin:left center;">Issues</div>
<div class="a t" style="left:345px;top:1034px;font-size:11px;line-height:15px;color:#dadada;font-weight:normal;">2</div>
<div class="a t" style="left:359px;top:1034px;font-size:11px;line-height:15px;color:#dadada;font-weight:normal;transform:scaleX(0.9519);transform-origin:left center;">Search Results</div>
<div class="a t" style="left:447px;top:1034px;font-size:11px;line-height:15px;color:#dadada;font-weight:normal;">3</div>
<div class="a t" style="left:461px;top:1034px;font-size:11px;line-height:15px;color:#dadada;font-weight:normal;transform:scaleX(0.9734);transform-origin:left center;">Application Output</div>
<div class="a t" style="left:566px;top:1034px;font-size:11px;line-height:15px;color:#dadada;font-weight:normal;">5</div>
<div class="a t" style="left:580.5px;top:1034px;font-size:11px;line-height:15px;color:#dadada;font-weight:normal;transform:scaleX(0.9220);transform-origin:left center;">QML Debugger Console</div>
<div class="a t" style="left:707.5px;top:1034px;font-size:11px;line-height:15px;color:#dadada;font-weight:normal;">6</div>
<div class="a t" style="left:721px;top:1034px;font-size:11px;line-height:15px;color:#dadada;font-weight:normal;transform:scaleX(0.9531);transform-origin:left center;">General Messages</div>
<svg class="a" style="left:827px;top:1034px;" width="8" height="11" viewBox="0 0 8 11"><path d="M0 4.5 L4.0 0 L8 4.5Z M0 6.5 L4.0 11 L8 6.5Z" fill="#b3b3b3"/></svg>
<div class="a" style="left:1865px;top:1030px;width:24px;height:20px;background:#131313;"></div>
<svg class="a" style="left:1869px;top:1032px;" width="17" height="14" viewBox="0 0 17 14"><rect x="1.5" y="8.5" width="13" height="4" rx="2" fill="#777" stroke="#c8c8c8" stroke-width="1.1"/><rect x="10.5" y="9.5" width="3.5" height="2" fill="#000"/><path d="M10 4 L12.5 1 L15 4Z" fill="#d0d0d0"/></svg>
<svg class="a" style="left:1902px;top:1034px;" width="13" height="13" viewBox="0 0 13 13"><rect x="1" y="1.5" width="10" height="10" fill="none" stroke="#8a8a8a" stroke-width="1.2"/><rect x="6" y="1" width="5.5" height="11" fill="#8a8a8a"/></svg>
</body></html>
